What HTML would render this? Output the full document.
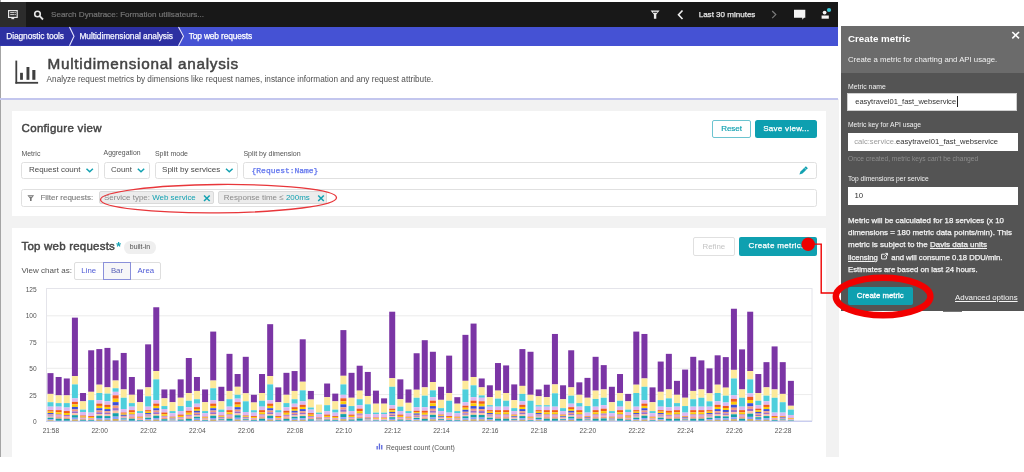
<!DOCTYPE html>
<html><head><meta charset="utf-8">
<style>
html,body{margin:0;padding:0;}
body{will-change:transform;width:1024px;height:472px;overflow:hidden;position:relative;background:#ffffff;font-family:"Liberation Sans", sans-serif;}
.a{position:absolute;box-sizing:border-box;}
.t{position:absolute;white-space:pre;line-height:1;}
.dd{position:absolute;box-sizing:border-box;background:#fff;border:1px solid #e0e0e0;border-radius:2.5px;}
.chip{position:absolute;box-sizing:border-box;background:#ececec;border:1px solid #dadada;border-radius:2px;}
svg{position:absolute;left:0;top:0;overflow:visible;}
</style></head><body>
<!-- left border line -->
<div class="a" style="left:0;top:0;width:1.2px;height:456.5px;background:#a4a4a4"></div>
<!-- gray page bg -->
<div class="a" style="left:1px;top:99px;width:837.5px;height:357.5px;background:#f2f2f2"></div>
<!-- scroll line -->
<!-- top bar -->
<div class="a" style="left:0;top:2px;width:838px;height:25px;background:#181818"></div>
<div class="a" style="left:0;top:2px;width:26px;height:25px;background:#2c2c2c"></div>
<!-- breadcrumb -->
<div class="a" style="left:0;top:27px;width:838px;height:18.7px;background:#4552d4"></div>
<svg width="1024" height="472" style="pointer-events:none">
  <polygon points="0,27 179,27 184,36.3 179,45.7 0,45.7" fill="#2d30a2"/>
  <polyline points="69.5,27 74,36.3 69.5,45.7" fill="none" stroke="#e8e8ff" stroke-width="1.1"/>
  <polyline points="178.5,27 183.5,36.3 178.5,45.7" fill="none" stroke="#e8e8ff" stroke-width="1.1"/>
</svg>
<!-- header white -->
<div class="a" style="left:1px;top:45.5px;width:837px;height:52.5px;background:#ffffff"></div>
<div class="a" style="left:0;top:98px;width:838px;height:1.5px;background:#c3c6ee"></div>
<!-- cards -->
<div class="a" style="left:11.7px;top:110.7px;width:814.8px;height:105.3px;background:#fff"></div>
<div class="a" style="left:11.7px;top:227.7px;width:814.6px;height:229.5px;background:#fff"></div>

<!-- card1 controls -->
<div class="dd" style="left:21px;top:161.6px;width:77.5px;height:17.6px"></div>
<div class="dd" style="left:103.6px;top:161.6px;width:46.2px;height:17.6px"></div>
<div class="dd" style="left:154.9px;top:161.6px;width:83.4px;height:17.6px"></div>
<div class="dd" style="left:243.4px;top:161.6px;width:573.6px;height:17.6px"></div>
<div class="dd" style="left:21px;top:189.3px;width:796px;height:17.5px"></div>
<div class="chip" style="left:98.5px;top:191.2px;width:115px;height:13.3px"></div>
<div class="chip" style="left:218.4px;top:191.2px;width:108.9px;height:13.3px"></div>
<!-- buttons card1 -->
<div class="a" style="left:712.3px;top:119.6px;width:38.6px;height:18.8px;border:1px solid #6cc4d0;border-radius:2px;background:#fff"></div>
<div class="t" style="left:712.3px;width:38.6px;text-align:center;top:125px;font-size:8px;color:#12a1b1;-webkit-text-stroke:0.2px #12a1b1">Reset</div>
<div class="a" style="left:755.2px;top:119.6px;width:61.8px;height:18.8px;border-radius:2.5px;background:#0d9fb0"></div>
<div class="t" style="left:755.5px;width:61.5px;text-align:center;top:124.8px;font-size:8.1px;color:#fff;letter-spacing:0.25px;-webkit-text-stroke:0.25px #fff">Save view...</div>

<!-- card2 controls -->
<div class="a" style="left:124px;top:241.4px;width:32px;height:12.6px;border-radius:6.3px;background:#efefef"></div>
<div class="t" style="left:124px;width:32px;text-align:center;top:244.2px;font-size:6.9px;color:#4e4e4e">built-in</div>
<div class="a" style="left:74.2px;top:261.5px;width:86.8px;height:18px;border:1px solid #dedede;border-radius:2px;background:#fff"></div>
<div class="a" style="left:103.3px;top:261.5px;width:27.4px;height:18px;border:1px solid #8a90da;background:#f6f6f8"></div>
<div class="t" style="left:74.2px;width:29.1px;text-align:center;top:267px;font-size:7.8px;color:#4e5ad6">Line</div>
<div class="t" style="left:103.3px;width:27.4px;text-align:center;top:267px;font-size:7.8px;color:#5a62b8">Bar</div>
<div class="t" style="left:130.7px;width:30.3px;text-align:center;top:267px;font-size:7.8px;color:#4e5ad6">Area</div>
<div class="a" style="left:693px;top:237.4px;width:41.7px;height:18.2px;border:1px solid #e0e0e0;border-radius:2px;background:#fff"></div>
<div class="t" style="left:693px;width:41.7px;text-align:center;top:243.3px;font-size:7.9px;color:#c4c4c4">Refine</div>
<div class="a" style="left:739px;top:237.4px;width:78.4px;height:18.2px;border-radius:2px;background:#0fa0b0"></div>
<div class="t" style="left:748.6px;top:242.4px;font-size:8.1px;letter-spacing:0.3px;color:#fff;-webkit-text-stroke:0.25px #fff">Create metric...</div>

<!-- side panel -->
<div class="a" style="left:841px;top:26.2px;width:183px;height:47px;background:#6b6b6b"></div>
<div class="a" style="left:841px;top:73.2px;width:183px;height:237.8px;background:#545454"></div>
<div class="a" style="left:846.6px;top:92.5px;width:170.4px;height:18.5px;background:#fff;border:1px solid #cfcfcf"></div>
<div class="a" style="left:956.5px;top:96px;width:0.9px;height:11px;background:#222"></div>
<div class="a" style="left:847.9px;top:133px;width:170px;height:18px;background:#fff"></div>
<div class="a" style="left:847.9px;top:186.8px;width:170px;height:17.9px;background:#fff"></div>
<div class="a" style="left:847.5px;top:287px;width:65.5px;height:17.5px;border-radius:2px;background:#0fa0b0"></div>
<div class="t" style="left:847.5px;width:65.5px;text-align:center;top:292.3px;font-size:7.8px;color:#fff;-webkit-text-stroke:0.3px #fff">Create metric</div>
<div class="a" style="left:942.6px;top:310.5px;width:19px;height:1.6px;background:#777"></div>

<div class="t" style="left:51px;top:11.26px;font-size:8.08px;color:#747474;font-weight:normal;font-family:'Liberation Sans', sans-serif;-webkit-text-stroke:0.2px #747474;">Search Dynatrace: Formation utilisateurs...</div>
<div class="t" style="left:698.7px;top:11.19px;font-size:8.048px;color:#e6e6e6;font-weight:normal;font-family:'Liberation Sans', sans-serif;-webkit-text-stroke:0.25px currentColor;">Last 30 minutes</div>
<div class="t" style="left:6.2px;top:32.39px;font-size:8.4px;color:#f4f4ff;font-weight:normal;font-family:'Liberation Sans', sans-serif;-webkit-text-stroke:0.25px currentColor;letter-spacing:-0.083px;">Diagnostic tools</div>
<div class="t" style="left:79.4px;top:32.39px;font-size:8.4px;color:#f4f4ff;font-weight:normal;font-family:'Liberation Sans', sans-serif;-webkit-text-stroke:0.25px currentColor;letter-spacing:-0.059px;">Multidimensional analysis</div>
<div class="t" style="left:188.7px;top:32.39px;font-size:8.4px;color:#ffffff;font-weight:normal;font-family:'Liberation Sans', sans-serif;-webkit-text-stroke:0.25px currentColor;letter-spacing:-0.147px;">Top web requests</div>
<div class="t" style="left:47.5px;top:56.45px;font-size:15.3px;color:#444;font-weight:normal;font-family:'Liberation Sans', sans-serif;-webkit-text-stroke:0.5px #444;letter-spacing:0.722px;">Multidimensional analysis</div>
<div class="t" style="left:46.6px;top:76.25px;font-size:8.21px;color:#505050;font-weight:normal;font-family:'Liberation Sans', sans-serif;">Analyze request metrics by dimensions like request names, instance information and any request attribute.</div>
<div class="t" style="left:21.6px;top:123.27px;font-size:11.5px;color:#444;font-weight:normal;font-family:'Liberation Sans', sans-serif;-webkit-text-stroke:0.45px #444;letter-spacing:0.294px;">Configure view</div>
<div class="t" style="left:21.4px;top:149.99px;font-size:6.977px;color:#555;font-weight:normal;font-family:'Liberation Sans', sans-serif;">Metric</div>
<div class="t" style="left:103.6px;top:150.09px;font-size:6.858px;color:#555;font-weight:normal;font-family:'Liberation Sans', sans-serif;">Aggregation</div>
<div class="t" style="left:154.9px;top:149.97px;font-size:7.005px;color:#555;font-weight:normal;font-family:'Liberation Sans', sans-serif;">Split mode</div>
<div class="t" style="left:243.4px;top:149.91px;font-size:7.072px;color:#555;font-weight:normal;font-family:'Liberation Sans', sans-serif;">Split by dimension</div>
<div class="t" style="left:29px;top:165.84px;font-size:7.985px;color:#4a4a4a;font-weight:normal;font-family:'Liberation Sans', sans-serif;">Request count</div>
<div class="t" style="left:110.9px;top:165.94px;font-size:7.865px;color:#4a4a4a;font-weight:normal;font-family:'Liberation Sans', sans-serif;">Count</div>
<div class="t" style="left:162px;top:165.77px;font-size:8.07px;color:#4a4a4a;font-weight:normal;font-family:'Liberation Sans', sans-serif;">Split by services</div>
<div class="t" style="left:251.6px;top:166.57px;font-size:7.953px;color:#6074ee;font-weight:normal;font-family:'Liberation Mono', monospace;-webkit-text-stroke:0.25px #6074ee;">{Request:Name}</div>
<div class="t" style="left:40.4px;top:194.04px;font-size:7.984px;color:#808080;font-weight:normal;font-family:'Liberation Sans', sans-serif;-webkit-text-stroke:0.15px #808080;">Filter requests:</div>
<div class="t" style="left:104px;top:193.86px;font-size:7.962px;color:#8a8a8a;font-weight:normal;font-family:'Liberation Sans', sans-serif;">Service type: <span style="color:#12a1b1">Web service</span></div>
<div class="t" style="left:223.8px;top:193.83px;font-size:7.998px;color:#8a8a8a;font-weight:normal;font-family:'Liberation Sans', sans-serif;">Response time &le; <span style="color:#12a1b1">200ms</span></div>
<div class="t" style="left:21.5px;top:241.27px;font-size:11.5px;color:#444;font-weight:normal;font-family:'Liberation Sans', sans-serif;-webkit-text-stroke:0.45px #444;letter-spacing:0.210px;">Top web requests</div>
<div class="t" style="left:116.2px;top:241.14px;font-size:12px;color:#12a1b1;font-weight:bold;font-family:'Liberation Sans', sans-serif;">*</div>
<div class="t" style="left:21.5px;top:266.78px;font-size:8.062px;color:#555;font-weight:normal;font-family:'Liberation Sans', sans-serif;">View chart as:</div>
<div class="t" style="left:-63.3px;width:100px;text-align:right;top:287.11px;font-size:6.6px;color:#555;font-weight:normal;font-family:'Liberation Sans', sans-serif;">125</div>
<div class="t" style="left:-63.3px;width:100px;text-align:right;top:313.21px;font-size:6.6px;color:#555;font-weight:normal;font-family:'Liberation Sans', sans-serif;">100</div>
<div class="t" style="left:-63.3px;width:100px;text-align:right;top:339.61px;font-size:6.6px;color:#555;font-weight:normal;font-family:'Liberation Sans', sans-serif;">75</div>
<div class="t" style="left:-63.3px;width:100px;text-align:right;top:366.41px;font-size:6.6px;color:#555;font-weight:normal;font-family:'Liberation Sans', sans-serif;">50</div>
<div class="t" style="left:-63.3px;width:100px;text-align:right;top:392.91px;font-size:6.6px;color:#555;font-weight:normal;font-family:'Liberation Sans', sans-serif;">25</div>
<div class="t" style="left:-63.3px;width:100px;text-align:right;top:418.61px;font-size:6.6px;color:#555;font-weight:normal;font-family:'Liberation Sans', sans-serif;">0</div>
<div class="t" style="left:0.8999999999999986px;width:100px;text-align:center;top:427.91px;font-size:6.6px;color:#555;font-weight:normal;font-family:'Liberation Sans', sans-serif;">21:58</div>
<div class="t" style="left:49.71600000000001px;width:100px;text-align:center;top:427.91px;font-size:6.6px;color:#555;font-weight:normal;font-family:'Liberation Sans', sans-serif;">22:00</div>
<div class="t" style="left:98.53200000000001px;width:100px;text-align:center;top:427.91px;font-size:6.6px;color:#555;font-weight:normal;font-family:'Liberation Sans', sans-serif;">22:02</div>
<div class="t" style="left:147.348px;width:100px;text-align:center;top:427.91px;font-size:6.6px;color:#555;font-weight:normal;font-family:'Liberation Sans', sans-serif;">22:04</div>
<div class="t" style="left:196.16400000000002px;width:100px;text-align:center;top:427.91px;font-size:6.6px;color:#555;font-weight:normal;font-family:'Liberation Sans', sans-serif;">22:06</div>
<div class="t" style="left:244.98000000000002px;width:100px;text-align:center;top:427.91px;font-size:6.6px;color:#555;font-weight:normal;font-family:'Liberation Sans', sans-serif;">22:08</div>
<div class="t" style="left:293.796px;width:100px;text-align:center;top:427.91px;font-size:6.6px;color:#555;font-weight:normal;font-family:'Liberation Sans', sans-serif;">22:10</div>
<div class="t" style="left:342.61199999999997px;width:100px;text-align:center;top:427.91px;font-size:6.6px;color:#555;font-weight:normal;font-family:'Liberation Sans', sans-serif;">22:12</div>
<div class="t" style="left:391.428px;width:100px;text-align:center;top:427.91px;font-size:6.6px;color:#555;font-weight:normal;font-family:'Liberation Sans', sans-serif;">22:14</div>
<div class="t" style="left:440.244px;width:100px;text-align:center;top:427.91px;font-size:6.6px;color:#555;font-weight:normal;font-family:'Liberation Sans', sans-serif;">22:16</div>
<div class="t" style="left:489.06000000000006px;width:100px;text-align:center;top:427.91px;font-size:6.6px;color:#555;font-weight:normal;font-family:'Liberation Sans', sans-serif;">22:18</div>
<div class="t" style="left:537.876px;width:100px;text-align:center;top:427.91px;font-size:6.6px;color:#555;font-weight:normal;font-family:'Liberation Sans', sans-serif;">22:20</div>
<div class="t" style="left:586.692px;width:100px;text-align:center;top:427.91px;font-size:6.6px;color:#555;font-weight:normal;font-family:'Liberation Sans', sans-serif;">22:22</div>
<div class="t" style="left:635.508px;width:100px;text-align:center;top:427.91px;font-size:6.6px;color:#555;font-weight:normal;font-family:'Liberation Sans', sans-serif;">22:24</div>
<div class="t" style="left:684.324px;width:100px;text-align:center;top:427.91px;font-size:6.6px;color:#555;font-weight:normal;font-family:'Liberation Sans', sans-serif;">22:26</div>
<div class="t" style="left:733.14px;width:100px;text-align:center;top:427.91px;font-size:6.6px;color:#555;font-weight:normal;font-family:'Liberation Sans', sans-serif;">22:28</div>
<div class="t" style="left:386px;top:444.70px;font-size:6.857px;color:#555;font-weight:normal;font-family:'Liberation Sans', sans-serif;">Request count (Count)</div>
<div class="t" style="left:848px;top:33.72px;font-size:9.78px;color:#ffffff;font-weight:bold;font-family:'Liberation Sans', sans-serif;">Create metric</div>
<div class="t" style="left:848px;top:56.40px;font-size:7.793px;color:#f2f2f2;font-weight:normal;font-family:'Liberation Sans', sans-serif;">Create a metric for charting and API usage.</div>
<div class="t" style="left:848px;top:83.59px;font-size:6.864px;color:#f2f2f2;font-weight:normal;font-family:'Liberation Sans', sans-serif;">Metric name</div>
<div class="t" style="left:855.2px;top:97.92px;font-size:7.542px;color:#333;font-weight:normal;font-family:'Liberation Sans', sans-serif;">easytravel01_fast_webservice</div>
<div class="t" style="left:848px;top:121.59px;font-size:6.747px;color:#f2f2f2;font-weight:normal;font-family:'Liberation Sans', sans-serif;">Metric key for API usage</div>
<div class="t" style="left:854.2px;top:137.56px;font-size:7.612px;color:#333;font-weight:normal;font-family:'Liberation Sans', sans-serif;"><span style="color:#9a9a9a">calc:service.</span>easytravel01_fast_webservice</div>
<div class="t" style="left:848px;top:155.83px;font-size:6.7px;color:#8e8e8e;font-weight:normal;font-family:'Liberation Sans', sans-serif;">Once created, metric keys can&#39;t be changed</div>
<div class="t" style="left:848px;top:175.85px;font-size:6.671px;color:#f2f2f2;font-weight:normal;font-family:'Liberation Sans', sans-serif;">Top dimensions per service</div>
<div class="t" style="left:854.5px;top:191.60px;font-size:7.8px;color:#333;font-weight:normal;font-family:'Liberation Sans', sans-serif;">10</div>
<div class="t" style="left:848px;top:216.54px;font-size:7.873px;color:#f4f4f4;font-weight:normal;font-family:'Liberation Sans', sans-serif;-webkit-text-stroke:0.25px #f4f4f4;">Metric will be calculated for 18 services (x 10</div>
<div class="t" style="left:848px;top:228.88px;font-size:7.939px;color:#f4f4f4;font-weight:normal;font-family:'Liberation Sans', sans-serif;-webkit-text-stroke:0.25px #f4f4f4;">dimensions = 180 metric data points/min). This</div>
<div class="t" style="left:848px;top:241.21px;font-size:8.026px;color:#f4f4f4;font-weight:normal;font-family:'Liberation Sans', sans-serif;-webkit-text-stroke:0.25px #f4f4f4;">metric is subject to the <u>Davis data units</u></div>
<div class="t" style="left:848px;top:253.89px;font-size:7.686px;color:#f4f4f4;font-weight:normal;font-family:'Liberation Sans', sans-serif;-webkit-text-stroke:0.25px #f4f4f4;"><u>licensing</u> <span style="display:inline-block;width:9px"></span> and will consume 0.18 DDU/min.</div>
<div class="t" style="left:848px;top:266.26px;font-size:7.725px;color:#f4f4f4;font-weight:normal;font-family:'Liberation Sans', sans-serif;-webkit-text-stroke:0.25px #f4f4f4;">Estimates are based on last 24 hours.</div>
<div class="t" style="left:955px;top:293.62px;font-size:7.897px;color:#f4f4f4;font-weight:normal;font-family:'Liberation Sans', sans-serif;"><u>Advanced options</u></div>

<svg width="1024" height="472">
<line x1="46" y1="315.8" x2="812" y2="315.8" stroke="#ececec" stroke-width="1"/>
<line x1="46" y1="342.1" x2="812" y2="342.1" stroke="#ececec" stroke-width="1"/>
<line x1="46" y1="368.3" x2="812" y2="368.3" stroke="#ececec" stroke-width="1"/>
<line x1="46" y1="394.6" x2="812" y2="394.6" stroke="#ececec" stroke-width="1"/>
<rect x="46.5" y="288.5" width="765.5" height="132.4" fill="none" stroke="#e4e4ea" stroke-width="1"/>
<rect x="47.50" y="373.13" width="6.0" height="20.77" fill="#7b35a5"/>
<rect x="47.50" y="393.90" width="6.0" height="8.31" fill="#fde99a"/>
<rect x="47.50" y="402.21" width="6.0" height="4.45" fill="#4ecfdc"/>
<rect x="47.50" y="406.66" width="6.0" height="3.50" fill="#dcb8f0"/>
<rect x="47.50" y="410.16" width="6.0" height="1.43" fill="#f05a1e"/>
<rect x="47.50" y="411.59" width="6.0" height="1.43" fill="#fccc0a"/>
<rect x="47.50" y="413.03" width="6.0" height="1.43" fill="#3f50d8"/>
<rect x="47.50" y="414.46" width="6.0" height="1.07" fill="#f59a7a"/>
<rect x="47.50" y="415.53" width="6.0" height="1.07" fill="#9d6cc9"/>
<rect x="47.50" y="416.60" width="6.0" height="1.07" fill="#fcc4a4"/>
<rect x="47.50" y="417.68" width="6.0" height="1.43" fill="#14a0a8"/>
<rect x="47.50" y="419.11" width="6.0" height="1.07" fill="#8fa2f8"/>
<rect x="47.50" y="420.18" width="6.0" height="0.72" fill="#c9a030"/>
<rect x="55.64" y="376.99" width="6.0" height="18.40" fill="#7b35a5"/>
<rect x="55.64" y="395.39" width="6.0" height="7.72" fill="#fde99a"/>
<rect x="55.64" y="403.10" width="6.0" height="3.56" fill="#4ecfdc"/>
<rect x="55.64" y="406.66" width="6.0" height="3.50" fill="#dcb8f0"/>
<rect x="55.64" y="410.16" width="6.0" height="2.15" fill="#f05a1e"/>
<rect x="55.64" y="412.31" width="6.0" height="2.15" fill="#fccc0a"/>
<rect x="55.64" y="414.46" width="6.0" height="1.07" fill="#9d6cc9"/>
<rect x="55.64" y="415.53" width="6.0" height="1.61" fill="#e9a2c6"/>
<rect x="55.64" y="417.14" width="6.0" height="1.61" fill="#f59a7a"/>
<rect x="55.64" y="418.75" width="6.0" height="2.15" fill="#14a0a8"/>
<rect x="63.77" y="378.47" width="6.0" height="16.91" fill="#7b35a5"/>
<rect x="63.77" y="395.39" width="6.0" height="7.72" fill="#fde99a"/>
<rect x="63.77" y="403.10" width="6.0" height="4.45" fill="#4ecfdc"/>
<rect x="63.77" y="407.55" width="6.0" height="3.50" fill="#dcb8f0"/>
<rect x="63.77" y="411.05" width="6.0" height="1.97" fill="#f05a1e"/>
<rect x="63.77" y="413.02" width="6.0" height="1.97" fill="#fccc0a"/>
<rect x="63.77" y="414.99" width="6.0" height="0.98" fill="#9d6cc9"/>
<rect x="63.77" y="415.98" width="6.0" height="1.48" fill="#e9a2c6"/>
<rect x="63.77" y="417.45" width="6.0" height="1.48" fill="#f59a7a"/>
<rect x="63.77" y="418.93" width="6.0" height="1.97" fill="#14a0a8"/>
<rect x="71.91" y="317.64" width="6.0" height="58.46" fill="#7b35a5"/>
<rect x="71.91" y="376.10" width="6.0" height="8.31" fill="#fde99a"/>
<rect x="71.91" y="384.41" width="6.0" height="13.95" fill="#4ecfdc"/>
<rect x="71.91" y="398.35" width="6.0" height="3.50" fill="#dcb8f0"/>
<rect x="71.91" y="401.85" width="6.0" height="2.54" fill="#f05a1e"/>
<rect x="71.91" y="404.39" width="6.0" height="2.54" fill="#fccc0a"/>
<rect x="71.91" y="406.93" width="6.0" height="2.54" fill="#3f50d8"/>
<rect x="71.91" y="409.47" width="6.0" height="1.90" fill="#f59a7a"/>
<rect x="71.91" y="411.38" width="6.0" height="1.90" fill="#9d6cc9"/>
<rect x="71.91" y="413.28" width="6.0" height="1.90" fill="#fcc4a4"/>
<rect x="71.91" y="415.19" width="6.0" height="2.54" fill="#14a0a8"/>
<rect x="71.91" y="417.73" width="6.0" height="1.90" fill="#8fa2f8"/>
<rect x="71.91" y="419.63" width="6.0" height="1.27" fill="#c9a030"/>
<rect x="80.04" y="393.01" width="6.0" height="8.31" fill="#7b35a5"/>
<rect x="80.04" y="401.32" width="6.0" height="8.31" fill="#fde99a"/>
<rect x="80.04" y="409.63" width="6.0" height="2.37" fill="#4ecfdc"/>
<rect x="80.04" y="412.00" width="6.0" height="3.50" fill="#dcb8f0"/>
<rect x="80.04" y="415.50" width="6.0" height="1.08" fill="#f05a1e"/>
<rect x="80.04" y="416.58" width="6.0" height="1.08" fill="#fccc0a"/>
<rect x="80.04" y="417.66" width="6.0" height="0.54" fill="#9d6cc9"/>
<rect x="80.04" y="418.20" width="6.0" height="0.81" fill="#e9a2c6"/>
<rect x="80.04" y="419.01" width="6.0" height="0.81" fill="#f59a7a"/>
<rect x="80.04" y="419.82" width="6.0" height="1.08" fill="#14a0a8"/>
<rect x="88.18" y="350.28" width="6.0" height="41.54" fill="#7b35a5"/>
<rect x="88.18" y="391.82" width="6.0" height="8.31" fill="#fde99a"/>
<rect x="88.18" y="400.13" width="6.0" height="12.46" fill="#4ecfdc"/>
<rect x="88.18" y="412.60" width="6.0" height="3.50" fill="#dcb8f0"/>
<rect x="88.18" y="416.10" width="6.0" height="0.96" fill="#f05a1e"/>
<rect x="88.18" y="417.06" width="6.0" height="0.96" fill="#fccc0a"/>
<rect x="88.18" y="418.02" width="6.0" height="0.48" fill="#9d6cc9"/>
<rect x="88.18" y="418.50" width="6.0" height="0.72" fill="#e9a2c6"/>
<rect x="88.18" y="419.22" width="6.0" height="0.72" fill="#f59a7a"/>
<rect x="88.18" y="419.94" width="6.0" height="0.96" fill="#14a0a8"/>
<rect x="96.32" y="349.09" width="6.0" height="35.61" fill="#7b35a5"/>
<rect x="96.32" y="384.70" width="6.0" height="8.31" fill="#fde99a"/>
<rect x="96.32" y="393.01" width="6.0" height="7.12" fill="#4ecfdc"/>
<rect x="96.32" y="400.13" width="6.0" height="3.50" fill="#dcb8f0"/>
<rect x="96.32" y="403.63" width="6.0" height="2.30" fill="#f05a1e"/>
<rect x="96.32" y="405.94" width="6.0" height="2.30" fill="#fccc0a"/>
<rect x="96.32" y="408.24" width="6.0" height="2.30" fill="#3f50d8"/>
<rect x="96.32" y="410.54" width="6.0" height="1.73" fill="#f59a7a"/>
<rect x="96.32" y="412.27" width="6.0" height="1.73" fill="#9d6cc9"/>
<rect x="96.32" y="413.99" width="6.0" height="1.73" fill="#fcc4a4"/>
<rect x="96.32" y="415.72" width="6.0" height="2.30" fill="#14a0a8"/>
<rect x="96.32" y="418.02" width="6.0" height="1.73" fill="#8fa2f8"/>
<rect x="96.32" y="419.75" width="6.0" height="1.15" fill="#c9a030"/>
<rect x="104.45" y="347.91" width="6.0" height="39.47" fill="#7b35a5"/>
<rect x="104.45" y="387.37" width="6.0" height="6.23" fill="#fde99a"/>
<rect x="104.45" y="393.61" width="6.0" height="7.72" fill="#4ecfdc"/>
<rect x="104.45" y="401.32" width="6.0" height="3.50" fill="#dcb8f0"/>
<rect x="104.45" y="404.82" width="6.0" height="2.14" fill="#f05a1e"/>
<rect x="104.45" y="406.96" width="6.0" height="2.14" fill="#fccc0a"/>
<rect x="104.45" y="409.11" width="6.0" height="2.14" fill="#3f50d8"/>
<rect x="104.45" y="411.25" width="6.0" height="1.61" fill="#f59a7a"/>
<rect x="104.45" y="412.86" width="6.0" height="1.61" fill="#9d6cc9"/>
<rect x="104.45" y="414.47" width="6.0" height="1.61" fill="#fcc4a4"/>
<rect x="104.45" y="416.08" width="6.0" height="2.14" fill="#14a0a8"/>
<rect x="104.45" y="418.22" width="6.0" height="1.61" fill="#8fa2f8"/>
<rect x="104.45" y="419.83" width="6.0" height="1.07" fill="#c9a030"/>
<rect x="112.59" y="360.37" width="6.0" height="20.18" fill="#7b35a5"/>
<rect x="112.59" y="380.55" width="6.0" height="7.72" fill="#fde99a"/>
<rect x="112.59" y="388.26" width="6.0" height="3.56" fill="#4ecfdc"/>
<rect x="112.59" y="391.82" width="6.0" height="3.50" fill="#dcb8f0"/>
<rect x="112.59" y="395.32" width="6.0" height="3.41" fill="#f05a1e"/>
<rect x="112.59" y="398.73" width="6.0" height="3.41" fill="#fccc0a"/>
<rect x="112.59" y="402.14" width="6.0" height="3.41" fill="#3f50d8"/>
<rect x="112.59" y="405.55" width="6.0" height="2.56" fill="#f59a7a"/>
<rect x="112.59" y="408.11" width="6.0" height="2.56" fill="#9d6cc9"/>
<rect x="112.59" y="410.67" width="6.0" height="2.56" fill="#fcc4a4"/>
<rect x="112.59" y="413.23" width="6.0" height="3.41" fill="#14a0a8"/>
<rect x="112.59" y="416.64" width="6.0" height="2.56" fill="#8fa2f8"/>
<rect x="112.59" y="419.19" width="6.0" height="1.71" fill="#c9a030"/>
<rect x="120.72" y="352.95" width="6.0" height="36.50" fill="#7b35a5"/>
<rect x="120.72" y="389.45" width="6.0" height="8.31" fill="#fde99a"/>
<rect x="120.72" y="397.76" width="6.0" height="11.28" fill="#4ecfdc"/>
<rect x="120.72" y="409.04" width="6.0" height="3.50" fill="#dcb8f0"/>
<rect x="120.72" y="412.54" width="6.0" height="1.12" fill="#f05a1e"/>
<rect x="120.72" y="413.65" width="6.0" height="1.12" fill="#fccc0a"/>
<rect x="120.72" y="414.77" width="6.0" height="1.12" fill="#3f50d8"/>
<rect x="120.72" y="415.88" width="6.0" height="0.84" fill="#f59a7a"/>
<rect x="120.72" y="416.72" width="6.0" height="0.84" fill="#9d6cc9"/>
<rect x="120.72" y="417.55" width="6.0" height="0.84" fill="#fcc4a4"/>
<rect x="120.72" y="418.39" width="6.0" height="1.12" fill="#14a0a8"/>
<rect x="120.72" y="419.51" width="6.0" height="0.84" fill="#8fa2f8"/>
<rect x="120.72" y="420.34" width="6.0" height="0.56" fill="#c9a030"/>
<rect x="128.86" y="376.99" width="6.0" height="17.80" fill="#7b35a5"/>
<rect x="128.86" y="394.79" width="6.0" height="8.31" fill="#fde99a"/>
<rect x="128.86" y="403.10" width="6.0" height="3.56" fill="#4ecfdc"/>
<rect x="128.86" y="406.66" width="6.0" height="3.50" fill="#dcb8f0"/>
<rect x="128.86" y="410.16" width="6.0" height="2.15" fill="#f05a1e"/>
<rect x="128.86" y="412.31" width="6.0" height="2.15" fill="#fccc0a"/>
<rect x="128.86" y="414.46" width="6.0" height="1.07" fill="#9d6cc9"/>
<rect x="128.86" y="415.53" width="6.0" height="1.61" fill="#e9a2c6"/>
<rect x="128.86" y="417.14" width="6.0" height="1.61" fill="#f59a7a"/>
<rect x="128.86" y="418.75" width="6.0" height="2.15" fill="#14a0a8"/>
<rect x="137.00" y="389.45" width="6.0" height="12.76" fill="#7b35a5"/>
<rect x="137.00" y="402.21" width="6.0" height="8.90" fill="#fde99a"/>
<rect x="137.00" y="411.11" width="6.0" height="2.08" fill="#4ecfdc"/>
<rect x="137.00" y="413.19" width="6.0" height="3.50" fill="#dcb8f0"/>
<rect x="137.00" y="416.69" width="6.0" height="0.84" fill="#f05a1e"/>
<rect x="137.00" y="417.53" width="6.0" height="0.84" fill="#fccc0a"/>
<rect x="137.00" y="418.37" width="6.0" height="0.42" fill="#9d6cc9"/>
<rect x="137.00" y="418.79" width="6.0" height="0.63" fill="#e9a2c6"/>
<rect x="137.00" y="419.43" width="6.0" height="0.63" fill="#f59a7a"/>
<rect x="137.00" y="420.06" width="6.0" height="0.84" fill="#14a0a8"/>
<rect x="145.13" y="344.35" width="6.0" height="43.03" fill="#7b35a5"/>
<rect x="145.13" y="387.37" width="6.0" height="8.90" fill="#fde99a"/>
<rect x="145.13" y="396.28" width="6.0" height="10.39" fill="#4ecfdc"/>
<rect x="145.13" y="406.66" width="6.0" height="3.50" fill="#dcb8f0"/>
<rect x="145.13" y="410.16" width="6.0" height="1.43" fill="#f05a1e"/>
<rect x="145.13" y="411.59" width="6.0" height="1.43" fill="#fccc0a"/>
<rect x="145.13" y="413.03" width="6.0" height="1.43" fill="#3f50d8"/>
<rect x="145.13" y="414.46" width="6.0" height="1.07" fill="#f59a7a"/>
<rect x="145.13" y="415.53" width="6.0" height="1.07" fill="#9d6cc9"/>
<rect x="145.13" y="416.60" width="6.0" height="1.07" fill="#fcc4a4"/>
<rect x="145.13" y="417.68" width="6.0" height="1.43" fill="#14a0a8"/>
<rect x="145.13" y="419.11" width="6.0" height="1.07" fill="#8fa2f8"/>
<rect x="145.13" y="420.18" width="6.0" height="0.72" fill="#c9a030"/>
<rect x="153.27" y="307.26" width="6.0" height="63.80" fill="#7b35a5"/>
<rect x="153.27" y="371.05" width="6.0" height="8.31" fill="#fde99a"/>
<rect x="153.27" y="379.36" width="6.0" height="20.77" fill="#4ecfdc"/>
<rect x="153.27" y="400.13" width="6.0" height="3.50" fill="#dcb8f0"/>
<rect x="153.27" y="403.63" width="6.0" height="2.30" fill="#f05a1e"/>
<rect x="153.27" y="405.94" width="6.0" height="2.30" fill="#fccc0a"/>
<rect x="153.27" y="408.24" width="6.0" height="2.30" fill="#3f50d8"/>
<rect x="153.27" y="410.54" width="6.0" height="1.73" fill="#f59a7a"/>
<rect x="153.27" y="412.27" width="6.0" height="1.73" fill="#9d6cc9"/>
<rect x="153.27" y="413.99" width="6.0" height="1.73" fill="#fcc4a4"/>
<rect x="153.27" y="415.72" width="6.0" height="2.30" fill="#14a0a8"/>
<rect x="153.27" y="418.02" width="6.0" height="1.73" fill="#8fa2f8"/>
<rect x="153.27" y="419.75" width="6.0" height="1.15" fill="#c9a030"/>
<rect x="161.40" y="389.45" width="6.0" height="8.90" fill="#7b35a5"/>
<rect x="161.40" y="398.35" width="6.0" height="7.72" fill="#fde99a"/>
<rect x="161.40" y="406.07" width="6.0" height="2.97" fill="#4ecfdc"/>
<rect x="161.40" y="409.04" width="6.0" height="3.50" fill="#dcb8f0"/>
<rect x="161.40" y="412.54" width="6.0" height="1.67" fill="#f05a1e"/>
<rect x="161.40" y="414.21" width="6.0" height="1.67" fill="#fccc0a"/>
<rect x="161.40" y="415.88" width="6.0" height="0.84" fill="#9d6cc9"/>
<rect x="161.40" y="416.72" width="6.0" height="1.25" fill="#e9a2c6"/>
<rect x="161.40" y="417.97" width="6.0" height="1.25" fill="#f59a7a"/>
<rect x="161.40" y="419.23" width="6.0" height="1.67" fill="#14a0a8"/>
<rect x="169.54" y="389.45" width="6.0" height="12.76" fill="#7b35a5"/>
<rect x="169.54" y="402.21" width="6.0" height="8.90" fill="#fde99a"/>
<rect x="169.54" y="411.11" width="6.0" height="2.08" fill="#4ecfdc"/>
<rect x="169.54" y="413.19" width="6.0" height="3.50" fill="#dcb8f0"/>
<rect x="169.54" y="416.69" width="6.0" height="0.56" fill="#f05a1e"/>
<rect x="169.54" y="417.25" width="6.0" height="0.56" fill="#fccc0a"/>
<rect x="169.54" y="417.81" width="6.0" height="0.56" fill="#3f50d8"/>
<rect x="169.54" y="418.37" width="6.0" height="0.42" fill="#f59a7a"/>
<rect x="169.54" y="418.79" width="6.0" height="0.42" fill="#9d6cc9"/>
<rect x="169.54" y="419.22" width="6.0" height="0.42" fill="#fcc4a4"/>
<rect x="169.54" y="419.64" width="6.0" height="0.56" fill="#14a0a8"/>
<rect x="169.54" y="420.20" width="6.0" height="0.42" fill="#8fa2f8"/>
<rect x="169.54" y="420.62" width="6.0" height="0.28" fill="#c9a030"/>
<rect x="177.68" y="379.36" width="6.0" height="18.40" fill="#7b35a5"/>
<rect x="177.68" y="397.76" width="6.0" height="8.31" fill="#fde99a"/>
<rect x="177.68" y="406.07" width="6.0" height="5.04" fill="#4ecfdc"/>
<rect x="177.68" y="411.11" width="6.0" height="3.50" fill="#dcb8f0"/>
<rect x="177.68" y="414.61" width="6.0" height="1.26" fill="#f05a1e"/>
<rect x="177.68" y="415.87" width="6.0" height="1.26" fill="#fccc0a"/>
<rect x="177.68" y="417.13" width="6.0" height="0.63" fill="#9d6cc9"/>
<rect x="177.68" y="417.76" width="6.0" height="0.94" fill="#e9a2c6"/>
<rect x="177.68" y="418.70" width="6.0" height="0.94" fill="#f59a7a"/>
<rect x="177.68" y="419.64" width="6.0" height="1.26" fill="#14a0a8"/>
<rect x="185.81" y="358.00" width="6.0" height="35.01" fill="#7b35a5"/>
<rect x="185.81" y="393.01" width="6.0" height="7.72" fill="#fde99a"/>
<rect x="185.81" y="400.73" width="6.0" height="6.53" fill="#4ecfdc"/>
<rect x="185.81" y="407.26" width="6.0" height="3.50" fill="#dcb8f0"/>
<rect x="185.81" y="410.76" width="6.0" height="2.03" fill="#f05a1e"/>
<rect x="185.81" y="412.78" width="6.0" height="2.03" fill="#fccc0a"/>
<rect x="185.81" y="414.81" width="6.0" height="1.01" fill="#9d6cc9"/>
<rect x="185.81" y="415.83" width="6.0" height="1.52" fill="#e9a2c6"/>
<rect x="185.81" y="417.35" width="6.0" height="1.52" fill="#f59a7a"/>
<rect x="185.81" y="418.87" width="6.0" height="2.03" fill="#14a0a8"/>
<rect x="193.95" y="376.99" width="6.0" height="13.95" fill="#7b35a5"/>
<rect x="193.95" y="390.93" width="6.0" height="8.31" fill="#fde99a"/>
<rect x="193.95" y="399.24" width="6.0" height="4.45" fill="#4ecfdc"/>
<rect x="193.95" y="403.69" width="6.0" height="3.50" fill="#dcb8f0"/>
<rect x="193.95" y="407.19" width="6.0" height="1.83" fill="#f05a1e"/>
<rect x="193.95" y="409.02" width="6.0" height="1.83" fill="#fccc0a"/>
<rect x="193.95" y="410.85" width="6.0" height="1.83" fill="#3f50d8"/>
<rect x="193.95" y="412.68" width="6.0" height="1.37" fill="#f59a7a"/>
<rect x="193.95" y="414.05" width="6.0" height="1.37" fill="#9d6cc9"/>
<rect x="193.95" y="415.42" width="6.0" height="1.37" fill="#fcc4a4"/>
<rect x="193.95" y="416.79" width="6.0" height="1.83" fill="#14a0a8"/>
<rect x="193.95" y="418.62" width="6.0" height="1.37" fill="#8fa2f8"/>
<rect x="193.95" y="419.99" width="6.0" height="0.91" fill="#c9a030"/>
<rect x="202.08" y="389.45" width="6.0" height="12.76" fill="#7b35a5"/>
<rect x="202.08" y="402.21" width="6.0" height="8.90" fill="#fde99a"/>
<rect x="202.08" y="411.11" width="6.0" height="2.08" fill="#4ecfdc"/>
<rect x="202.08" y="413.19" width="6.0" height="3.50" fill="#dcb8f0"/>
<rect x="202.08" y="416.69" width="6.0" height="0.84" fill="#f05a1e"/>
<rect x="202.08" y="417.53" width="6.0" height="0.84" fill="#fccc0a"/>
<rect x="202.08" y="418.37" width="6.0" height="0.42" fill="#9d6cc9"/>
<rect x="202.08" y="418.79" width="6.0" height="0.63" fill="#e9a2c6"/>
<rect x="202.08" y="419.43" width="6.0" height="0.63" fill="#f59a7a"/>
<rect x="202.08" y="420.06" width="6.0" height="0.84" fill="#14a0a8"/>
<rect x="210.22" y="331.59" width="6.0" height="48.96" fill="#7b35a5"/>
<rect x="210.22" y="380.55" width="6.0" height="7.72" fill="#fde99a"/>
<rect x="210.22" y="388.26" width="6.0" height="11.87" fill="#4ecfdc"/>
<rect x="210.22" y="400.13" width="6.0" height="3.50" fill="#dcb8f0"/>
<rect x="210.22" y="403.63" width="6.0" height="2.30" fill="#f05a1e"/>
<rect x="210.22" y="405.94" width="6.0" height="2.30" fill="#fccc0a"/>
<rect x="210.22" y="408.24" width="6.0" height="2.30" fill="#3f50d8"/>
<rect x="210.22" y="410.54" width="6.0" height="1.73" fill="#f59a7a"/>
<rect x="210.22" y="412.27" width="6.0" height="1.73" fill="#9d6cc9"/>
<rect x="210.22" y="413.99" width="6.0" height="1.73" fill="#fcc4a4"/>
<rect x="210.22" y="415.72" width="6.0" height="2.30" fill="#14a0a8"/>
<rect x="210.22" y="418.02" width="6.0" height="1.73" fill="#8fa2f8"/>
<rect x="210.22" y="419.75" width="6.0" height="1.15" fill="#c9a030"/>
<rect x="218.36" y="386.78" width="6.0" height="14.54" fill="#7b35a5"/>
<rect x="218.36" y="401.32" width="6.0" height="8.31" fill="#fde99a"/>
<rect x="218.36" y="409.63" width="6.0" height="2.37" fill="#4ecfdc"/>
<rect x="218.36" y="412.00" width="6.0" height="3.50" fill="#dcb8f0"/>
<rect x="218.36" y="415.50" width="6.0" height="0.72" fill="#f05a1e"/>
<rect x="218.36" y="416.22" width="6.0" height="0.72" fill="#fccc0a"/>
<rect x="218.36" y="416.94" width="6.0" height="0.72" fill="#3f50d8"/>
<rect x="218.36" y="417.66" width="6.0" height="0.54" fill="#f59a7a"/>
<rect x="218.36" y="418.20" width="6.0" height="0.54" fill="#9d6cc9"/>
<rect x="218.36" y="418.74" width="6.0" height="0.54" fill="#fcc4a4"/>
<rect x="218.36" y="419.28" width="6.0" height="0.72" fill="#14a0a8"/>
<rect x="218.36" y="420.00" width="6.0" height="0.54" fill="#8fa2f8"/>
<rect x="218.36" y="420.54" width="6.0" height="0.36" fill="#c9a030"/>
<rect x="226.49" y="353.84" width="6.0" height="37.09" fill="#7b35a5"/>
<rect x="226.49" y="390.93" width="6.0" height="8.31" fill="#fde99a"/>
<rect x="226.49" y="399.24" width="6.0" height="7.42" fill="#4ecfdc"/>
<rect x="226.49" y="406.66" width="6.0" height="3.50" fill="#dcb8f0"/>
<rect x="226.49" y="410.16" width="6.0" height="2.15" fill="#f05a1e"/>
<rect x="226.49" y="412.31" width="6.0" height="2.15" fill="#fccc0a"/>
<rect x="226.49" y="414.46" width="6.0" height="1.07" fill="#9d6cc9"/>
<rect x="226.49" y="415.53" width="6.0" height="1.61" fill="#e9a2c6"/>
<rect x="226.49" y="417.14" width="6.0" height="1.61" fill="#f59a7a"/>
<rect x="226.49" y="418.75" width="6.0" height="2.15" fill="#14a0a8"/>
<rect x="234.63" y="374.02" width="6.0" height="12.76" fill="#7b35a5"/>
<rect x="234.63" y="386.78" width="6.0" height="8.01" fill="#fde99a"/>
<rect x="234.63" y="394.79" width="6.0" height="3.86" fill="#4ecfdc"/>
<rect x="234.63" y="398.65" width="6.0" height="3.50" fill="#dcb8f0"/>
<rect x="234.63" y="402.15" width="6.0" height="2.50" fill="#f05a1e"/>
<rect x="234.63" y="404.65" width="6.0" height="2.50" fill="#fccc0a"/>
<rect x="234.63" y="407.15" width="6.0" height="2.50" fill="#3f50d8"/>
<rect x="234.63" y="409.65" width="6.0" height="1.88" fill="#f59a7a"/>
<rect x="234.63" y="411.52" width="6.0" height="1.88" fill="#9d6cc9"/>
<rect x="234.63" y="413.40" width="6.0" height="1.88" fill="#fcc4a4"/>
<rect x="234.63" y="415.27" width="6.0" height="2.50" fill="#14a0a8"/>
<rect x="234.63" y="417.77" width="6.0" height="1.88" fill="#8fa2f8"/>
<rect x="234.63" y="419.65" width="6.0" height="1.25" fill="#c9a030"/>
<rect x="242.76" y="356.81" width="6.0" height="36.50" fill="#7b35a5"/>
<rect x="242.76" y="393.31" width="6.0" height="8.01" fill="#fde99a"/>
<rect x="242.76" y="401.32" width="6.0" height="10.68" fill="#4ecfdc"/>
<rect x="242.76" y="412.00" width="6.0" height="3.50" fill="#dcb8f0"/>
<rect x="242.76" y="415.50" width="6.0" height="0.72" fill="#f05a1e"/>
<rect x="242.76" y="416.22" width="6.0" height="0.72" fill="#fccc0a"/>
<rect x="242.76" y="416.94" width="6.0" height="0.72" fill="#3f50d8"/>
<rect x="242.76" y="417.66" width="6.0" height="0.54" fill="#f59a7a"/>
<rect x="242.76" y="418.20" width="6.0" height="0.54" fill="#9d6cc9"/>
<rect x="242.76" y="418.74" width="6.0" height="0.54" fill="#fcc4a4"/>
<rect x="242.76" y="419.28" width="6.0" height="0.72" fill="#14a0a8"/>
<rect x="242.76" y="420.00" width="6.0" height="0.54" fill="#8fa2f8"/>
<rect x="242.76" y="420.54" width="6.0" height="0.36" fill="#c9a030"/>
<rect x="250.90" y="394.79" width="6.0" height="7.72" fill="#7b35a5"/>
<rect x="250.90" y="402.51" width="6.0" height="7.72" fill="#fde99a"/>
<rect x="250.90" y="410.22" width="6.0" height="2.37" fill="#4ecfdc"/>
<rect x="250.90" y="412.60" width="6.0" height="3.50" fill="#dcb8f0"/>
<rect x="250.90" y="416.10" width="6.0" height="0.96" fill="#f05a1e"/>
<rect x="250.90" y="417.06" width="6.0" height="0.96" fill="#fccc0a"/>
<rect x="250.90" y="418.02" width="6.0" height="0.48" fill="#9d6cc9"/>
<rect x="250.90" y="418.50" width="6.0" height="0.72" fill="#e9a2c6"/>
<rect x="250.90" y="419.22" width="6.0" height="0.72" fill="#f59a7a"/>
<rect x="250.90" y="419.94" width="6.0" height="0.96" fill="#14a0a8"/>
<rect x="259.04" y="374.02" width="6.0" height="18.99" fill="#7b35a5"/>
<rect x="259.04" y="393.01" width="6.0" height="7.72" fill="#fde99a"/>
<rect x="259.04" y="400.73" width="6.0" height="5.93" fill="#4ecfdc"/>
<rect x="259.04" y="406.66" width="6.0" height="3.50" fill="#dcb8f0"/>
<rect x="259.04" y="410.16" width="6.0" height="2.15" fill="#f05a1e"/>
<rect x="259.04" y="412.31" width="6.0" height="2.15" fill="#fccc0a"/>
<rect x="259.04" y="414.46" width="6.0" height="1.07" fill="#9d6cc9"/>
<rect x="259.04" y="415.53" width="6.0" height="1.61" fill="#e9a2c6"/>
<rect x="259.04" y="417.14" width="6.0" height="1.61" fill="#f59a7a"/>
<rect x="259.04" y="418.75" width="6.0" height="2.15" fill="#14a0a8"/>
<rect x="267.17" y="324.17" width="6.0" height="51.93" fill="#7b35a5"/>
<rect x="267.17" y="376.10" width="6.0" height="8.31" fill="#fde99a"/>
<rect x="267.17" y="384.41" width="6.0" height="15.73" fill="#4ecfdc"/>
<rect x="267.17" y="400.13" width="6.0" height="3.50" fill="#dcb8f0"/>
<rect x="267.17" y="403.63" width="6.0" height="2.30" fill="#f05a1e"/>
<rect x="267.17" y="405.94" width="6.0" height="2.30" fill="#fccc0a"/>
<rect x="267.17" y="408.24" width="6.0" height="2.30" fill="#3f50d8"/>
<rect x="267.17" y="410.54" width="6.0" height="1.73" fill="#f59a7a"/>
<rect x="267.17" y="412.27" width="6.0" height="1.73" fill="#9d6cc9"/>
<rect x="267.17" y="413.99" width="6.0" height="1.73" fill="#fcc4a4"/>
<rect x="267.17" y="415.72" width="6.0" height="2.30" fill="#14a0a8"/>
<rect x="267.17" y="418.02" width="6.0" height="1.73" fill="#8fa2f8"/>
<rect x="267.17" y="419.75" width="6.0" height="1.15" fill="#c9a030"/>
<rect x="275.31" y="387.37" width="6.0" height="14.84" fill="#7b35a5"/>
<rect x="275.31" y="402.21" width="6.0" height="8.01" fill="#fde99a"/>
<rect x="275.31" y="410.22" width="6.0" height="2.37" fill="#4ecfdc"/>
<rect x="275.31" y="412.60" width="6.0" height="3.50" fill="#dcb8f0"/>
<rect x="275.31" y="416.10" width="6.0" height="0.96" fill="#f05a1e"/>
<rect x="275.31" y="417.06" width="6.0" height="0.96" fill="#fccc0a"/>
<rect x="275.31" y="418.02" width="6.0" height="0.48" fill="#9d6cc9"/>
<rect x="275.31" y="418.50" width="6.0" height="0.72" fill="#e9a2c6"/>
<rect x="275.31" y="419.22" width="6.0" height="0.72" fill="#f59a7a"/>
<rect x="275.31" y="419.94" width="6.0" height="0.96" fill="#14a0a8"/>
<rect x="283.44" y="372.83" width="6.0" height="21.96" fill="#7b35a5"/>
<rect x="283.44" y="394.79" width="6.0" height="8.31" fill="#fde99a"/>
<rect x="283.44" y="403.10" width="6.0" height="4.15" fill="#4ecfdc"/>
<rect x="283.44" y="407.26" width="6.0" height="3.50" fill="#dcb8f0"/>
<rect x="283.44" y="410.76" width="6.0" height="2.03" fill="#f05a1e"/>
<rect x="283.44" y="412.78" width="6.0" height="2.03" fill="#fccc0a"/>
<rect x="283.44" y="414.81" width="6.0" height="1.01" fill="#9d6cc9"/>
<rect x="283.44" y="415.83" width="6.0" height="1.52" fill="#e9a2c6"/>
<rect x="283.44" y="417.35" width="6.0" height="1.52" fill="#f59a7a"/>
<rect x="283.44" y="418.87" width="6.0" height="2.03" fill="#14a0a8"/>
<rect x="291.58" y="371.05" width="6.0" height="19.88" fill="#7b35a5"/>
<rect x="291.58" y="390.93" width="6.0" height="8.31" fill="#fde99a"/>
<rect x="291.58" y="399.24" width="6.0" height="4.45" fill="#4ecfdc"/>
<rect x="291.58" y="403.69" width="6.0" height="3.50" fill="#dcb8f0"/>
<rect x="291.58" y="407.19" width="6.0" height="1.83" fill="#f05a1e"/>
<rect x="291.58" y="409.02" width="6.0" height="1.83" fill="#fccc0a"/>
<rect x="291.58" y="410.85" width="6.0" height="1.83" fill="#3f50d8"/>
<rect x="291.58" y="412.68" width="6.0" height="1.37" fill="#f59a7a"/>
<rect x="291.58" y="414.05" width="6.0" height="1.37" fill="#9d6cc9"/>
<rect x="291.58" y="415.42" width="6.0" height="1.37" fill="#fcc4a4"/>
<rect x="291.58" y="416.79" width="6.0" height="1.83" fill="#14a0a8"/>
<rect x="291.58" y="418.62" width="6.0" height="1.37" fill="#8fa2f8"/>
<rect x="291.58" y="419.99" width="6.0" height="0.91" fill="#c9a030"/>
<rect x="299.72" y="339.30" width="6.0" height="42.43" fill="#7b35a5"/>
<rect x="299.72" y="381.74" width="6.0" height="8.61" fill="#fde99a"/>
<rect x="299.72" y="390.34" width="6.0" height="10.98" fill="#4ecfdc"/>
<rect x="299.72" y="401.32" width="6.0" height="3.50" fill="#dcb8f0"/>
<rect x="299.72" y="404.82" width="6.0" height="2.14" fill="#f05a1e"/>
<rect x="299.72" y="406.96" width="6.0" height="2.14" fill="#fccc0a"/>
<rect x="299.72" y="409.11" width="6.0" height="2.14" fill="#3f50d8"/>
<rect x="299.72" y="411.25" width="6.0" height="1.61" fill="#f59a7a"/>
<rect x="299.72" y="412.86" width="6.0" height="1.61" fill="#9d6cc9"/>
<rect x="299.72" y="414.47" width="6.0" height="1.61" fill="#fcc4a4"/>
<rect x="299.72" y="416.08" width="6.0" height="2.14" fill="#14a0a8"/>
<rect x="299.72" y="418.22" width="6.0" height="1.61" fill="#8fa2f8"/>
<rect x="299.72" y="419.83" width="6.0" height="1.07" fill="#c9a030"/>
<rect x="307.85" y="390.93" width="6.0" height="8.61" fill="#7b35a5"/>
<rect x="307.85" y="399.54" width="6.0" height="8.01" fill="#fde99a"/>
<rect x="307.85" y="407.55" width="6.0" height="2.08" fill="#4ecfdc"/>
<rect x="307.85" y="409.63" width="6.0" height="3.50" fill="#dcb8f0"/>
<rect x="307.85" y="413.13" width="6.0" height="1.55" fill="#f05a1e"/>
<rect x="307.85" y="414.68" width="6.0" height="1.55" fill="#fccc0a"/>
<rect x="307.85" y="416.24" width="6.0" height="0.78" fill="#9d6cc9"/>
<rect x="307.85" y="417.01" width="6.0" height="1.17" fill="#e9a2c6"/>
<rect x="307.85" y="418.18" width="6.0" height="1.17" fill="#f59a7a"/>
<rect x="307.85" y="419.35" width="6.0" height="1.55" fill="#14a0a8"/>
<rect x="315.99" y="404.58" width="6.0" height="8.01" fill="#fde99a"/>
<rect x="315.99" y="412.60" width="6.0" height="1.48" fill="#4ecfdc"/>
<rect x="315.99" y="414.08" width="6.0" height="3.50" fill="#dcb8f0"/>
<rect x="315.99" y="417.58" width="6.0" height="0.44" fill="#f05a1e"/>
<rect x="315.99" y="418.02" width="6.0" height="0.44" fill="#fccc0a"/>
<rect x="315.99" y="418.47" width="6.0" height="0.44" fill="#3f50d8"/>
<rect x="315.99" y="418.91" width="6.0" height="0.33" fill="#f59a7a"/>
<rect x="315.99" y="419.24" width="6.0" height="0.33" fill="#9d6cc9"/>
<rect x="315.99" y="419.57" width="6.0" height="0.33" fill="#fcc4a4"/>
<rect x="315.99" y="419.90" width="6.0" height="0.44" fill="#14a0a8"/>
<rect x="315.99" y="420.35" width="6.0" height="0.33" fill="#8fa2f8"/>
<rect x="315.99" y="420.68" width="6.0" height="0.22" fill="#c9a030"/>
<rect x="324.12" y="383.52" width="6.0" height="13.65" fill="#7b35a5"/>
<rect x="324.12" y="397.17" width="6.0" height="8.01" fill="#fde99a"/>
<rect x="324.12" y="405.18" width="6.0" height="5.93" fill="#4ecfdc"/>
<rect x="324.12" y="411.11" width="6.0" height="3.50" fill="#dcb8f0"/>
<rect x="324.12" y="414.61" width="6.0" height="1.26" fill="#f05a1e"/>
<rect x="324.12" y="415.87" width="6.0" height="1.26" fill="#fccc0a"/>
<rect x="324.12" y="417.13" width="6.0" height="0.63" fill="#9d6cc9"/>
<rect x="324.12" y="417.76" width="6.0" height="0.94" fill="#e9a2c6"/>
<rect x="324.12" y="418.70" width="6.0" height="0.94" fill="#f59a7a"/>
<rect x="324.12" y="419.64" width="6.0" height="1.26" fill="#14a0a8"/>
<rect x="332.26" y="393.61" width="6.0" height="7.72" fill="#7b35a5"/>
<rect x="332.26" y="401.32" width="6.0" height="8.31" fill="#fde99a"/>
<rect x="332.26" y="409.63" width="6.0" height="2.97" fill="#4ecfdc"/>
<rect x="332.26" y="412.60" width="6.0" height="3.50" fill="#dcb8f0"/>
<rect x="332.26" y="416.10" width="6.0" height="0.96" fill="#f05a1e"/>
<rect x="332.26" y="417.06" width="6.0" height="0.96" fill="#fccc0a"/>
<rect x="332.26" y="418.02" width="6.0" height="0.48" fill="#9d6cc9"/>
<rect x="332.26" y="418.50" width="6.0" height="0.72" fill="#e9a2c6"/>
<rect x="332.26" y="419.22" width="6.0" height="0.72" fill="#f59a7a"/>
<rect x="332.26" y="419.94" width="6.0" height="0.96" fill="#14a0a8"/>
<rect x="340.40" y="330.10" width="6.0" height="45.70" fill="#7b35a5"/>
<rect x="340.40" y="375.80" width="6.0" height="8.61" fill="#fde99a"/>
<rect x="340.40" y="384.41" width="6.0" height="10.39" fill="#4ecfdc"/>
<rect x="340.40" y="394.79" width="6.0" height="3.50" fill="#dcb8f0"/>
<rect x="340.40" y="398.29" width="6.0" height="3.01" fill="#f05a1e"/>
<rect x="340.40" y="401.31" width="6.0" height="3.01" fill="#fccc0a"/>
<rect x="340.40" y="404.32" width="6.0" height="3.01" fill="#3f50d8"/>
<rect x="340.40" y="407.34" width="6.0" height="2.26" fill="#f59a7a"/>
<rect x="340.40" y="409.60" width="6.0" height="2.26" fill="#9d6cc9"/>
<rect x="340.40" y="411.86" width="6.0" height="2.26" fill="#fcc4a4"/>
<rect x="340.40" y="414.12" width="6.0" height="3.01" fill="#14a0a8"/>
<rect x="340.40" y="417.13" width="6.0" height="2.26" fill="#8fa2f8"/>
<rect x="340.40" y="419.39" width="6.0" height="1.51" fill="#c9a030"/>
<rect x="348.53" y="372.83" width="6.0" height="24.93" fill="#7b35a5"/>
<rect x="348.53" y="397.76" width="6.0" height="8.31" fill="#fde99a"/>
<rect x="348.53" y="406.07" width="6.0" height="5.04" fill="#4ecfdc"/>
<rect x="348.53" y="411.11" width="6.0" height="3.50" fill="#dcb8f0"/>
<rect x="348.53" y="414.61" width="6.0" height="1.26" fill="#f05a1e"/>
<rect x="348.53" y="415.87" width="6.0" height="1.26" fill="#fccc0a"/>
<rect x="348.53" y="417.13" width="6.0" height="0.63" fill="#9d6cc9"/>
<rect x="348.53" y="417.76" width="6.0" height="0.94" fill="#e9a2c6"/>
<rect x="348.53" y="418.70" width="6.0" height="0.94" fill="#f59a7a"/>
<rect x="348.53" y="419.64" width="6.0" height="1.26" fill="#14a0a8"/>
<rect x="356.67" y="365.71" width="6.0" height="24.93" fill="#7b35a5"/>
<rect x="356.67" y="390.64" width="6.0" height="8.61" fill="#fde99a"/>
<rect x="356.67" y="399.24" width="6.0" height="5.93" fill="#4ecfdc"/>
<rect x="356.67" y="405.18" width="6.0" height="3.50" fill="#dcb8f0"/>
<rect x="356.67" y="408.68" width="6.0" height="2.44" fill="#f05a1e"/>
<rect x="356.67" y="411.12" width="6.0" height="2.44" fill="#fccc0a"/>
<rect x="356.67" y="413.57" width="6.0" height="1.22" fill="#9d6cc9"/>
<rect x="356.67" y="414.79" width="6.0" height="1.83" fill="#e9a2c6"/>
<rect x="356.67" y="416.62" width="6.0" height="1.83" fill="#f59a7a"/>
<rect x="356.67" y="418.46" width="6.0" height="2.44" fill="#14a0a8"/>
<rect x="364.80" y="371.94" width="6.0" height="24.04" fill="#7b35a5"/>
<rect x="364.80" y="395.98" width="6.0" height="8.31" fill="#fde99a"/>
<rect x="364.80" y="404.29" width="6.0" height="9.79" fill="#4ecfdc"/>
<rect x="364.80" y="414.08" width="6.0" height="3.50" fill="#dcb8f0"/>
<rect x="364.80" y="417.58" width="6.0" height="0.44" fill="#f05a1e"/>
<rect x="364.80" y="418.02" width="6.0" height="0.44" fill="#fccc0a"/>
<rect x="364.80" y="418.47" width="6.0" height="0.44" fill="#3f50d8"/>
<rect x="364.80" y="418.91" width="6.0" height="0.33" fill="#f59a7a"/>
<rect x="364.80" y="419.24" width="6.0" height="0.33" fill="#9d6cc9"/>
<rect x="364.80" y="419.57" width="6.0" height="0.33" fill="#fcc4a4"/>
<rect x="364.80" y="419.90" width="6.0" height="0.44" fill="#14a0a8"/>
<rect x="364.80" y="420.35" width="6.0" height="0.33" fill="#8fa2f8"/>
<rect x="364.80" y="420.68" width="6.0" height="0.22" fill="#c9a030"/>
<rect x="372.94" y="390.64" width="6.0" height="13.06" fill="#7b35a5"/>
<rect x="372.94" y="403.69" width="6.0" height="8.90" fill="#fde99a"/>
<rect x="372.94" y="412.60" width="6.0" height="1.48" fill="#4ecfdc"/>
<rect x="372.94" y="414.08" width="6.0" height="3.50" fill="#dcb8f0"/>
<rect x="372.94" y="417.58" width="6.0" height="0.66" fill="#f05a1e"/>
<rect x="372.94" y="418.24" width="6.0" height="0.66" fill="#fccc0a"/>
<rect x="372.94" y="418.91" width="6.0" height="0.33" fill="#9d6cc9"/>
<rect x="372.94" y="419.24" width="6.0" height="0.50" fill="#e9a2c6"/>
<rect x="372.94" y="419.74" width="6.0" height="0.50" fill="#f59a7a"/>
<rect x="372.94" y="420.24" width="6.0" height="0.66" fill="#14a0a8"/>
<rect x="381.08" y="398.35" width="6.0" height="5.34" fill="#7b35a5"/>
<rect x="381.08" y="403.69" width="6.0" height="8.90" fill="#fde99a"/>
<rect x="381.08" y="412.60" width="6.0" height="1.48" fill="#4ecfdc"/>
<rect x="381.08" y="414.08" width="6.0" height="3.50" fill="#dcb8f0"/>
<rect x="381.08" y="417.58" width="6.0" height="0.66" fill="#f05a1e"/>
<rect x="381.08" y="418.24" width="6.0" height="0.66" fill="#fccc0a"/>
<rect x="381.08" y="418.91" width="6.0" height="0.33" fill="#9d6cc9"/>
<rect x="381.08" y="419.24" width="6.0" height="0.50" fill="#e9a2c6"/>
<rect x="381.08" y="419.74" width="6.0" height="0.50" fill="#f59a7a"/>
<rect x="381.08" y="420.24" width="6.0" height="0.66" fill="#14a0a8"/>
<rect x="389.21" y="311.71" width="6.0" height="66.47" fill="#7b35a5"/>
<rect x="389.21" y="378.18" width="6.0" height="8.61" fill="#fde99a"/>
<rect x="389.21" y="386.78" width="6.0" height="18.40" fill="#4ecfdc"/>
<rect x="389.21" y="405.18" width="6.0" height="3.50" fill="#dcb8f0"/>
<rect x="389.21" y="408.68" width="6.0" height="1.63" fill="#f05a1e"/>
<rect x="389.21" y="410.31" width="6.0" height="1.63" fill="#fccc0a"/>
<rect x="389.21" y="411.94" width="6.0" height="1.63" fill="#3f50d8"/>
<rect x="389.21" y="413.57" width="6.0" height="1.22" fill="#f59a7a"/>
<rect x="389.21" y="414.79" width="6.0" height="1.22" fill="#9d6cc9"/>
<rect x="389.21" y="416.01" width="6.0" height="1.22" fill="#fcc4a4"/>
<rect x="389.21" y="417.23" width="6.0" height="1.63" fill="#14a0a8"/>
<rect x="389.21" y="418.86" width="6.0" height="1.22" fill="#8fa2f8"/>
<rect x="389.21" y="420.09" width="6.0" height="0.81" fill="#c9a030"/>
<rect x="397.35" y="379.36" width="6.0" height="19.88" fill="#7b35a5"/>
<rect x="397.35" y="399.24" width="6.0" height="7.42" fill="#fde99a"/>
<rect x="397.35" y="406.66" width="6.0" height="4.45" fill="#4ecfdc"/>
<rect x="397.35" y="411.11" width="6.0" height="3.50" fill="#dcb8f0"/>
<rect x="397.35" y="414.61" width="6.0" height="1.26" fill="#f05a1e"/>
<rect x="397.35" y="415.87" width="6.0" height="1.26" fill="#fccc0a"/>
<rect x="397.35" y="417.13" width="6.0" height="0.63" fill="#9d6cc9"/>
<rect x="397.35" y="417.76" width="6.0" height="0.94" fill="#e9a2c6"/>
<rect x="397.35" y="418.70" width="6.0" height="0.94" fill="#f59a7a"/>
<rect x="397.35" y="419.64" width="6.0" height="1.26" fill="#14a0a8"/>
<rect x="405.48" y="389.45" width="6.0" height="13.35" fill="#7b35a5"/>
<rect x="405.48" y="402.80" width="6.0" height="8.31" fill="#fde99a"/>
<rect x="405.48" y="411.11" width="6.0" height="2.08" fill="#4ecfdc"/>
<rect x="405.48" y="413.19" width="6.0" height="3.50" fill="#dcb8f0"/>
<rect x="405.48" y="416.69" width="6.0" height="0.84" fill="#f05a1e"/>
<rect x="405.48" y="417.53" width="6.0" height="0.84" fill="#fccc0a"/>
<rect x="405.48" y="418.37" width="6.0" height="0.42" fill="#9d6cc9"/>
<rect x="405.48" y="418.79" width="6.0" height="0.63" fill="#e9a2c6"/>
<rect x="405.48" y="419.43" width="6.0" height="0.63" fill="#f59a7a"/>
<rect x="405.48" y="420.06" width="6.0" height="0.84" fill="#14a0a8"/>
<rect x="413.62" y="353.25" width="6.0" height="36.50" fill="#7b35a5"/>
<rect x="413.62" y="389.75" width="6.0" height="8.01" fill="#fde99a"/>
<rect x="413.62" y="397.76" width="6.0" height="9.50" fill="#4ecfdc"/>
<rect x="413.62" y="407.26" width="6.0" height="3.50" fill="#dcb8f0"/>
<rect x="413.62" y="410.76" width="6.0" height="1.35" fill="#f05a1e"/>
<rect x="413.62" y="412.11" width="6.0" height="1.35" fill="#fccc0a"/>
<rect x="413.62" y="413.46" width="6.0" height="1.35" fill="#3f50d8"/>
<rect x="413.62" y="414.81" width="6.0" height="1.01" fill="#f59a7a"/>
<rect x="413.62" y="415.83" width="6.0" height="1.01" fill="#9d6cc9"/>
<rect x="413.62" y="416.84" width="6.0" height="1.01" fill="#fcc4a4"/>
<rect x="413.62" y="417.86" width="6.0" height="1.35" fill="#14a0a8"/>
<rect x="413.62" y="419.21" width="6.0" height="1.01" fill="#8fa2f8"/>
<rect x="413.62" y="420.22" width="6.0" height="0.68" fill="#c9a030"/>
<rect x="421.76" y="340.19" width="6.0" height="47.18" fill="#7b35a5"/>
<rect x="421.76" y="387.37" width="6.0" height="8.31" fill="#fde99a"/>
<rect x="421.76" y="395.68" width="6.0" height="11.57" fill="#4ecfdc"/>
<rect x="421.76" y="407.26" width="6.0" height="3.50" fill="#dcb8f0"/>
<rect x="421.76" y="410.76" width="6.0" height="2.03" fill="#f05a1e"/>
<rect x="421.76" y="412.78" width="6.0" height="2.03" fill="#fccc0a"/>
<rect x="421.76" y="414.81" width="6.0" height="1.01" fill="#9d6cc9"/>
<rect x="421.76" y="415.83" width="6.0" height="1.52" fill="#e9a2c6"/>
<rect x="421.76" y="417.35" width="6.0" height="1.52" fill="#f59a7a"/>
<rect x="421.76" y="418.87" width="6.0" height="2.03" fill="#14a0a8"/>
<rect x="429.89" y="351.77" width="6.0" height="30.27" fill="#7b35a5"/>
<rect x="429.89" y="382.03" width="6.0" height="8.31" fill="#fde99a"/>
<rect x="429.89" y="390.34" width="6.0" height="6.82" fill="#4ecfdc"/>
<rect x="429.89" y="397.17" width="6.0" height="3.50" fill="#dcb8f0"/>
<rect x="429.89" y="400.67" width="6.0" height="2.70" fill="#f05a1e"/>
<rect x="429.89" y="403.36" width="6.0" height="2.70" fill="#fccc0a"/>
<rect x="429.89" y="406.06" width="6.0" height="2.70" fill="#3f50d8"/>
<rect x="429.89" y="408.76" width="6.0" height="2.02" fill="#f59a7a"/>
<rect x="429.89" y="410.78" width="6.0" height="2.02" fill="#9d6cc9"/>
<rect x="429.89" y="412.81" width="6.0" height="2.02" fill="#fcc4a4"/>
<rect x="429.89" y="414.83" width="6.0" height="2.70" fill="#14a0a8"/>
<rect x="429.89" y="417.53" width="6.0" height="2.02" fill="#8fa2f8"/>
<rect x="429.89" y="419.55" width="6.0" height="1.35" fill="#c9a030"/>
<rect x="438.03" y="386.78" width="6.0" height="13.06" fill="#7b35a5"/>
<rect x="438.03" y="399.84" width="6.0" height="8.31" fill="#fde99a"/>
<rect x="438.03" y="408.15" width="6.0" height="2.97" fill="#4ecfdc"/>
<rect x="438.03" y="411.11" width="6.0" height="3.50" fill="#dcb8f0"/>
<rect x="438.03" y="414.61" width="6.0" height="0.84" fill="#f05a1e"/>
<rect x="438.03" y="415.45" width="6.0" height="0.84" fill="#fccc0a"/>
<rect x="438.03" y="416.29" width="6.0" height="0.84" fill="#3f50d8"/>
<rect x="438.03" y="417.13" width="6.0" height="0.63" fill="#f59a7a"/>
<rect x="438.03" y="417.76" width="6.0" height="0.63" fill="#9d6cc9"/>
<rect x="438.03" y="418.39" width="6.0" height="0.63" fill="#fcc4a4"/>
<rect x="438.03" y="419.01" width="6.0" height="0.84" fill="#14a0a8"/>
<rect x="438.03" y="419.85" width="6.0" height="0.63" fill="#8fa2f8"/>
<rect x="438.03" y="420.48" width="6.0" height="0.42" fill="#c9a030"/>
<rect x="446.16" y="355.62" width="6.0" height="37.39" fill="#7b35a5"/>
<rect x="446.16" y="393.01" width="6.0" height="7.72" fill="#fde99a"/>
<rect x="446.16" y="400.73" width="6.0" height="11.87" fill="#4ecfdc"/>
<rect x="446.16" y="412.60" width="6.0" height="3.50" fill="#dcb8f0"/>
<rect x="446.16" y="416.10" width="6.0" height="0.96" fill="#f05a1e"/>
<rect x="446.16" y="417.06" width="6.0" height="0.96" fill="#fccc0a"/>
<rect x="446.16" y="418.02" width="6.0" height="0.48" fill="#9d6cc9"/>
<rect x="446.16" y="418.50" width="6.0" height="0.72" fill="#e9a2c6"/>
<rect x="446.16" y="419.22" width="6.0" height="0.72" fill="#f59a7a"/>
<rect x="446.16" y="419.94" width="6.0" height="0.96" fill="#14a0a8"/>
<rect x="454.30" y="397.17" width="6.0" height="6.53" fill="#7b35a5"/>
<rect x="454.30" y="403.69" width="6.0" height="7.42" fill="#fde99a"/>
<rect x="454.30" y="411.11" width="6.0" height="2.08" fill="#4ecfdc"/>
<rect x="454.30" y="413.19" width="6.0" height="3.50" fill="#dcb8f0"/>
<rect x="454.30" y="416.69" width="6.0" height="0.84" fill="#f05a1e"/>
<rect x="454.30" y="417.53" width="6.0" height="0.84" fill="#fccc0a"/>
<rect x="454.30" y="418.37" width="6.0" height="0.42" fill="#9d6cc9"/>
<rect x="454.30" y="418.79" width="6.0" height="0.63" fill="#e9a2c6"/>
<rect x="454.30" y="419.43" width="6.0" height="0.63" fill="#f59a7a"/>
<rect x="454.30" y="420.06" width="6.0" height="0.84" fill="#14a0a8"/>
<rect x="462.44" y="334.85" width="6.0" height="45.99" fill="#7b35a5"/>
<rect x="462.44" y="380.85" width="6.0" height="8.61" fill="#fde99a"/>
<rect x="462.44" y="389.45" width="6.0" height="12.76" fill="#4ecfdc"/>
<rect x="462.44" y="402.21" width="6.0" height="3.50" fill="#dcb8f0"/>
<rect x="462.44" y="405.71" width="6.0" height="2.03" fill="#f05a1e"/>
<rect x="462.44" y="407.74" width="6.0" height="2.03" fill="#fccc0a"/>
<rect x="462.44" y="409.76" width="6.0" height="2.03" fill="#3f50d8"/>
<rect x="462.44" y="411.79" width="6.0" height="1.52" fill="#f59a7a"/>
<rect x="462.44" y="413.31" width="6.0" height="1.52" fill="#9d6cc9"/>
<rect x="462.44" y="414.82" width="6.0" height="1.52" fill="#fcc4a4"/>
<rect x="462.44" y="416.34" width="6.0" height="2.03" fill="#14a0a8"/>
<rect x="462.44" y="418.37" width="6.0" height="1.52" fill="#8fa2f8"/>
<rect x="462.44" y="419.89" width="6.0" height="1.01" fill="#c9a030"/>
<rect x="470.57" y="323.58" width="6.0" height="53.41" fill="#7b35a5"/>
<rect x="470.57" y="376.99" width="6.0" height="8.31" fill="#fde99a"/>
<rect x="470.57" y="385.30" width="6.0" height="11.87" fill="#4ecfdc"/>
<rect x="470.57" y="397.17" width="6.0" height="3.50" fill="#dcb8f0"/>
<rect x="470.57" y="400.67" width="6.0" height="2.70" fill="#f05a1e"/>
<rect x="470.57" y="403.36" width="6.0" height="2.70" fill="#fccc0a"/>
<rect x="470.57" y="406.06" width="6.0" height="2.70" fill="#3f50d8"/>
<rect x="470.57" y="408.76" width="6.0" height="2.02" fill="#f59a7a"/>
<rect x="470.57" y="410.78" width="6.0" height="2.02" fill="#9d6cc9"/>
<rect x="470.57" y="412.81" width="6.0" height="2.02" fill="#fcc4a4"/>
<rect x="470.57" y="414.83" width="6.0" height="2.70" fill="#14a0a8"/>
<rect x="470.57" y="417.53" width="6.0" height="2.02" fill="#8fa2f8"/>
<rect x="470.57" y="419.55" width="6.0" height="1.35" fill="#c9a030"/>
<rect x="478.71" y="378.47" width="6.0" height="8.90" fill="#7b35a5"/>
<rect x="478.71" y="387.37" width="6.0" height="8.01" fill="#fde99a"/>
<rect x="478.71" y="395.39" width="6.0" height="2.37" fill="#4ecfdc"/>
<rect x="478.71" y="397.76" width="6.0" height="3.50" fill="#dcb8f0"/>
<rect x="478.71" y="401.26" width="6.0" height="2.62" fill="#f05a1e"/>
<rect x="478.71" y="403.88" width="6.0" height="2.62" fill="#fccc0a"/>
<rect x="478.71" y="406.50" width="6.0" height="2.62" fill="#3f50d8"/>
<rect x="478.71" y="409.12" width="6.0" height="1.96" fill="#f59a7a"/>
<rect x="478.71" y="411.08" width="6.0" height="1.96" fill="#9d6cc9"/>
<rect x="478.71" y="413.04" width="6.0" height="1.96" fill="#fcc4a4"/>
<rect x="478.71" y="415.01" width="6.0" height="2.62" fill="#14a0a8"/>
<rect x="478.71" y="417.63" width="6.0" height="1.96" fill="#8fa2f8"/>
<rect x="478.71" y="419.59" width="6.0" height="1.31" fill="#c9a030"/>
<rect x="486.84" y="385.30" width="6.0" height="11.87" fill="#7b35a5"/>
<rect x="486.84" y="397.17" width="6.0" height="8.01" fill="#fde99a"/>
<rect x="486.84" y="405.18" width="6.0" height="1.48" fill="#4ecfdc"/>
<rect x="486.84" y="406.66" width="6.0" height="3.50" fill="#dcb8f0"/>
<rect x="486.84" y="410.16" width="6.0" height="1.43" fill="#f05a1e"/>
<rect x="486.84" y="411.59" width="6.0" height="1.43" fill="#fccc0a"/>
<rect x="486.84" y="413.03" width="6.0" height="1.43" fill="#3f50d8"/>
<rect x="486.84" y="414.46" width="6.0" height="1.07" fill="#f59a7a"/>
<rect x="486.84" y="415.53" width="6.0" height="1.07" fill="#9d6cc9"/>
<rect x="486.84" y="416.60" width="6.0" height="1.07" fill="#fcc4a4"/>
<rect x="486.84" y="417.68" width="6.0" height="1.43" fill="#14a0a8"/>
<rect x="486.84" y="419.11" width="6.0" height="1.07" fill="#8fa2f8"/>
<rect x="486.84" y="420.18" width="6.0" height="0.72" fill="#c9a030"/>
<rect x="494.98" y="363.04" width="6.0" height="27.60" fill="#7b35a5"/>
<rect x="494.98" y="390.64" width="6.0" height="8.01" fill="#fde99a"/>
<rect x="494.98" y="398.65" width="6.0" height="8.01" fill="#4ecfdc"/>
<rect x="494.98" y="406.66" width="6.0" height="3.50" fill="#dcb8f0"/>
<rect x="494.98" y="410.16" width="6.0" height="2.15" fill="#f05a1e"/>
<rect x="494.98" y="412.31" width="6.0" height="2.15" fill="#fccc0a"/>
<rect x="494.98" y="414.46" width="6.0" height="1.07" fill="#9d6cc9"/>
<rect x="494.98" y="415.53" width="6.0" height="1.61" fill="#e9a2c6"/>
<rect x="494.98" y="417.14" width="6.0" height="1.61" fill="#f59a7a"/>
<rect x="494.98" y="418.75" width="6.0" height="2.15" fill="#14a0a8"/>
<rect x="503.12" y="365.42" width="6.0" height="27.60" fill="#7b35a5"/>
<rect x="503.12" y="393.01" width="6.0" height="7.72" fill="#fde99a"/>
<rect x="503.12" y="400.73" width="6.0" height="5.93" fill="#4ecfdc"/>
<rect x="503.12" y="406.66" width="6.0" height="3.50" fill="#dcb8f0"/>
<rect x="503.12" y="410.16" width="6.0" height="2.15" fill="#f05a1e"/>
<rect x="503.12" y="412.31" width="6.0" height="2.15" fill="#fccc0a"/>
<rect x="503.12" y="414.46" width="6.0" height="1.07" fill="#9d6cc9"/>
<rect x="503.12" y="415.53" width="6.0" height="1.61" fill="#e9a2c6"/>
<rect x="503.12" y="417.14" width="6.0" height="1.61" fill="#f59a7a"/>
<rect x="503.12" y="418.75" width="6.0" height="2.15" fill="#14a0a8"/>
<rect x="511.25" y="384.41" width="6.0" height="15.73" fill="#7b35a5"/>
<rect x="511.25" y="400.13" width="6.0" height="8.01" fill="#fde99a"/>
<rect x="511.25" y="408.15" width="6.0" height="2.97" fill="#4ecfdc"/>
<rect x="511.25" y="411.11" width="6.0" height="3.50" fill="#dcb8f0"/>
<rect x="511.25" y="414.61" width="6.0" height="0.84" fill="#f05a1e"/>
<rect x="511.25" y="415.45" width="6.0" height="0.84" fill="#fccc0a"/>
<rect x="511.25" y="416.29" width="6.0" height="0.84" fill="#3f50d8"/>
<rect x="511.25" y="417.13" width="6.0" height="0.63" fill="#f59a7a"/>
<rect x="511.25" y="417.76" width="6.0" height="0.63" fill="#9d6cc9"/>
<rect x="511.25" y="418.39" width="6.0" height="0.63" fill="#fcc4a4"/>
<rect x="511.25" y="419.01" width="6.0" height="0.84" fill="#14a0a8"/>
<rect x="511.25" y="419.85" width="6.0" height="0.63" fill="#8fa2f8"/>
<rect x="511.25" y="420.48" width="6.0" height="0.42" fill="#c9a030"/>
<rect x="519.39" y="349.09" width="6.0" height="36.80" fill="#7b35a5"/>
<rect x="519.39" y="385.89" width="6.0" height="8.01" fill="#fde99a"/>
<rect x="519.39" y="393.90" width="6.0" height="7.42" fill="#4ecfdc"/>
<rect x="519.39" y="401.32" width="6.0" height="3.50" fill="#dcb8f0"/>
<rect x="519.39" y="404.82" width="6.0" height="2.14" fill="#f05a1e"/>
<rect x="519.39" y="406.96" width="6.0" height="2.14" fill="#fccc0a"/>
<rect x="519.39" y="409.11" width="6.0" height="2.14" fill="#3f50d8"/>
<rect x="519.39" y="411.25" width="6.0" height="1.61" fill="#f59a7a"/>
<rect x="519.39" y="412.86" width="6.0" height="1.61" fill="#9d6cc9"/>
<rect x="519.39" y="414.47" width="6.0" height="1.61" fill="#fcc4a4"/>
<rect x="519.39" y="416.08" width="6.0" height="2.14" fill="#14a0a8"/>
<rect x="519.39" y="418.22" width="6.0" height="1.61" fill="#8fa2f8"/>
<rect x="519.39" y="419.83" width="6.0" height="1.07" fill="#c9a030"/>
<rect x="527.52" y="351.77" width="6.0" height="43.03" fill="#7b35a5"/>
<rect x="527.52" y="394.79" width="6.0" height="5.93" fill="#fde99a"/>
<rect x="527.52" y="400.73" width="6.0" height="12.46" fill="#4ecfdc"/>
<rect x="527.52" y="413.19" width="6.0" height="3.50" fill="#dcb8f0"/>
<rect x="527.52" y="416.69" width="6.0" height="0.84" fill="#f05a1e"/>
<rect x="527.52" y="417.53" width="6.0" height="0.84" fill="#fccc0a"/>
<rect x="527.52" y="418.37" width="6.0" height="0.42" fill="#9d6cc9"/>
<rect x="527.52" y="418.79" width="6.0" height="0.63" fill="#e9a2c6"/>
<rect x="527.52" y="419.43" width="6.0" height="0.63" fill="#f59a7a"/>
<rect x="527.52" y="420.06" width="6.0" height="0.84" fill="#14a0a8"/>
<rect x="535.66" y="389.45" width="6.0" height="6.82" fill="#7b35a5"/>
<rect x="535.66" y="396.28" width="6.0" height="8.90" fill="#fde99a"/>
<rect x="535.66" y="405.18" width="6.0" height="1.48" fill="#4ecfdc"/>
<rect x="535.66" y="406.66" width="6.0" height="3.50" fill="#dcb8f0"/>
<rect x="535.66" y="410.16" width="6.0" height="1.43" fill="#f05a1e"/>
<rect x="535.66" y="411.59" width="6.0" height="1.43" fill="#fccc0a"/>
<rect x="535.66" y="413.03" width="6.0" height="1.43" fill="#3f50d8"/>
<rect x="535.66" y="414.46" width="6.0" height="1.07" fill="#f59a7a"/>
<rect x="535.66" y="415.53" width="6.0" height="1.07" fill="#9d6cc9"/>
<rect x="535.66" y="416.60" width="6.0" height="1.07" fill="#fcc4a4"/>
<rect x="535.66" y="417.68" width="6.0" height="1.43" fill="#14a0a8"/>
<rect x="535.66" y="419.11" width="6.0" height="1.07" fill="#8fa2f8"/>
<rect x="535.66" y="420.18" width="6.0" height="0.72" fill="#c9a030"/>
<rect x="543.80" y="384.70" width="6.0" height="12.46" fill="#7b35a5"/>
<rect x="543.80" y="397.17" width="6.0" height="8.01" fill="#fde99a"/>
<rect x="543.80" y="405.18" width="6.0" height="1.48" fill="#4ecfdc"/>
<rect x="543.80" y="406.66" width="6.0" height="3.50" fill="#dcb8f0"/>
<rect x="543.80" y="410.16" width="6.0" height="2.15" fill="#f05a1e"/>
<rect x="543.80" y="412.31" width="6.0" height="2.15" fill="#fccc0a"/>
<rect x="543.80" y="414.46" width="6.0" height="1.07" fill="#9d6cc9"/>
<rect x="543.80" y="415.53" width="6.0" height="1.61" fill="#e9a2c6"/>
<rect x="543.80" y="417.14" width="6.0" height="1.61" fill="#f59a7a"/>
<rect x="543.80" y="418.75" width="6.0" height="2.15" fill="#14a0a8"/>
<rect x="551.93" y="333.96" width="6.0" height="50.45" fill="#7b35a5"/>
<rect x="551.93" y="384.41" width="6.0" height="8.90" fill="#fde99a"/>
<rect x="551.93" y="393.31" width="6.0" height="13.35" fill="#4ecfdc"/>
<rect x="551.93" y="406.66" width="6.0" height="3.50" fill="#dcb8f0"/>
<rect x="551.93" y="410.16" width="6.0" height="2.15" fill="#f05a1e"/>
<rect x="551.93" y="412.31" width="6.0" height="2.15" fill="#fccc0a"/>
<rect x="551.93" y="414.46" width="6.0" height="1.07" fill="#9d6cc9"/>
<rect x="551.93" y="415.53" width="6.0" height="1.61" fill="#e9a2c6"/>
<rect x="551.93" y="417.14" width="6.0" height="1.61" fill="#f59a7a"/>
<rect x="551.93" y="418.75" width="6.0" height="2.15" fill="#14a0a8"/>
<rect x="560.07" y="385.30" width="6.0" height="13.95" fill="#7b35a5"/>
<rect x="560.07" y="399.24" width="6.0" height="8.90" fill="#fde99a"/>
<rect x="560.07" y="408.15" width="6.0" height="2.97" fill="#4ecfdc"/>
<rect x="560.07" y="411.11" width="6.0" height="3.50" fill="#dcb8f0"/>
<rect x="560.07" y="414.61" width="6.0" height="0.84" fill="#f05a1e"/>
<rect x="560.07" y="415.45" width="6.0" height="0.84" fill="#fccc0a"/>
<rect x="560.07" y="416.29" width="6.0" height="0.84" fill="#3f50d8"/>
<rect x="560.07" y="417.13" width="6.0" height="0.63" fill="#f59a7a"/>
<rect x="560.07" y="417.76" width="6.0" height="0.63" fill="#9d6cc9"/>
<rect x="560.07" y="418.39" width="6.0" height="0.63" fill="#fcc4a4"/>
<rect x="560.07" y="419.01" width="6.0" height="0.84" fill="#14a0a8"/>
<rect x="560.07" y="419.85" width="6.0" height="0.63" fill="#8fa2f8"/>
<rect x="560.07" y="420.48" width="6.0" height="0.42" fill="#c9a030"/>
<rect x="568.20" y="350.28" width="6.0" height="37.09" fill="#7b35a5"/>
<rect x="568.20" y="387.37" width="6.0" height="8.31" fill="#fde99a"/>
<rect x="568.20" y="395.68" width="6.0" height="8.01" fill="#4ecfdc"/>
<rect x="568.20" y="403.69" width="6.0" height="3.50" fill="#dcb8f0"/>
<rect x="568.20" y="407.19" width="6.0" height="1.83" fill="#f05a1e"/>
<rect x="568.20" y="409.02" width="6.0" height="1.83" fill="#fccc0a"/>
<rect x="568.20" y="410.85" width="6.0" height="1.83" fill="#3f50d8"/>
<rect x="568.20" y="412.68" width="6.0" height="1.37" fill="#f59a7a"/>
<rect x="568.20" y="414.05" width="6.0" height="1.37" fill="#9d6cc9"/>
<rect x="568.20" y="415.42" width="6.0" height="1.37" fill="#fcc4a4"/>
<rect x="568.20" y="416.79" width="6.0" height="1.83" fill="#14a0a8"/>
<rect x="568.20" y="418.62" width="6.0" height="1.37" fill="#8fa2f8"/>
<rect x="568.20" y="419.99" width="6.0" height="0.91" fill="#c9a030"/>
<rect x="576.34" y="382.33" width="6.0" height="12.46" fill="#7b35a5"/>
<rect x="576.34" y="394.79" width="6.0" height="8.31" fill="#fde99a"/>
<rect x="576.34" y="403.10" width="6.0" height="3.56" fill="#4ecfdc"/>
<rect x="576.34" y="406.66" width="6.0" height="3.50" fill="#dcb8f0"/>
<rect x="576.34" y="410.16" width="6.0" height="2.15" fill="#f05a1e"/>
<rect x="576.34" y="412.31" width="6.0" height="2.15" fill="#fccc0a"/>
<rect x="576.34" y="414.46" width="6.0" height="1.07" fill="#9d6cc9"/>
<rect x="576.34" y="415.53" width="6.0" height="1.61" fill="#e9a2c6"/>
<rect x="576.34" y="417.14" width="6.0" height="1.61" fill="#f59a7a"/>
<rect x="576.34" y="418.75" width="6.0" height="2.15" fill="#14a0a8"/>
<rect x="584.48" y="377.88" width="6.0" height="19.88" fill="#7b35a5"/>
<rect x="584.48" y="397.76" width="6.0" height="8.31" fill="#fde99a"/>
<rect x="584.48" y="406.07" width="6.0" height="6.53" fill="#4ecfdc"/>
<rect x="584.48" y="412.60" width="6.0" height="3.50" fill="#dcb8f0"/>
<rect x="584.48" y="416.10" width="6.0" height="0.64" fill="#f05a1e"/>
<rect x="584.48" y="416.74" width="6.0" height="0.64" fill="#fccc0a"/>
<rect x="584.48" y="417.38" width="6.0" height="0.64" fill="#3f50d8"/>
<rect x="584.48" y="418.02" width="6.0" height="0.48" fill="#f59a7a"/>
<rect x="584.48" y="418.50" width="6.0" height="0.48" fill="#9d6cc9"/>
<rect x="584.48" y="418.98" width="6.0" height="0.48" fill="#fcc4a4"/>
<rect x="584.48" y="419.46" width="6.0" height="0.64" fill="#14a0a8"/>
<rect x="584.48" y="420.10" width="6.0" height="0.48" fill="#8fa2f8"/>
<rect x="584.48" y="420.58" width="6.0" height="0.32" fill="#c9a030"/>
<rect x="592.61" y="356.81" width="6.0" height="33.83" fill="#7b35a5"/>
<rect x="592.61" y="390.64" width="6.0" height="8.31" fill="#fde99a"/>
<rect x="592.61" y="398.95" width="6.0" height="7.72" fill="#4ecfdc"/>
<rect x="592.61" y="406.66" width="6.0" height="3.50" fill="#dcb8f0"/>
<rect x="592.61" y="410.16" width="6.0" height="2.15" fill="#f05a1e"/>
<rect x="592.61" y="412.31" width="6.0" height="2.15" fill="#fccc0a"/>
<rect x="592.61" y="414.46" width="6.0" height="1.07" fill="#9d6cc9"/>
<rect x="592.61" y="415.53" width="6.0" height="1.61" fill="#e9a2c6"/>
<rect x="592.61" y="417.14" width="6.0" height="1.61" fill="#f59a7a"/>
<rect x="592.61" y="418.75" width="6.0" height="2.15" fill="#14a0a8"/>
<rect x="600.75" y="365.12" width="6.0" height="24.33" fill="#7b35a5"/>
<rect x="600.75" y="389.45" width="6.0" height="8.31" fill="#fde99a"/>
<rect x="600.75" y="397.76" width="6.0" height="7.42" fill="#4ecfdc"/>
<rect x="600.75" y="405.18" width="6.0" height="3.50" fill="#dcb8f0"/>
<rect x="600.75" y="408.68" width="6.0" height="2.44" fill="#f05a1e"/>
<rect x="600.75" y="411.12" width="6.0" height="2.44" fill="#fccc0a"/>
<rect x="600.75" y="413.57" width="6.0" height="1.22" fill="#9d6cc9"/>
<rect x="600.75" y="414.79" width="6.0" height="1.83" fill="#e9a2c6"/>
<rect x="600.75" y="416.62" width="6.0" height="1.83" fill="#f59a7a"/>
<rect x="600.75" y="418.46" width="6.0" height="2.44" fill="#14a0a8"/>
<rect x="608.88" y="386.78" width="6.0" height="15.43" fill="#7b35a5"/>
<rect x="608.88" y="402.21" width="6.0" height="8.90" fill="#fde99a"/>
<rect x="608.88" y="411.11" width="6.0" height="2.08" fill="#4ecfdc"/>
<rect x="608.88" y="413.19" width="6.0" height="3.50" fill="#dcb8f0"/>
<rect x="608.88" y="416.69" width="6.0" height="0.56" fill="#f05a1e"/>
<rect x="608.88" y="417.25" width="6.0" height="0.56" fill="#fccc0a"/>
<rect x="608.88" y="417.81" width="6.0" height="0.56" fill="#3f50d8"/>
<rect x="608.88" y="418.37" width="6.0" height="0.42" fill="#f59a7a"/>
<rect x="608.88" y="418.79" width="6.0" height="0.42" fill="#9d6cc9"/>
<rect x="608.88" y="419.22" width="6.0" height="0.42" fill="#fcc4a4"/>
<rect x="608.88" y="419.64" width="6.0" height="0.56" fill="#14a0a8"/>
<rect x="608.88" y="420.20" width="6.0" height="0.42" fill="#8fa2f8"/>
<rect x="608.88" y="420.62" width="6.0" height="0.28" fill="#c9a030"/>
<rect x="617.02" y="374.02" width="6.0" height="18.99" fill="#7b35a5"/>
<rect x="617.02" y="393.01" width="6.0" height="7.72" fill="#fde99a"/>
<rect x="617.02" y="400.73" width="6.0" height="5.93" fill="#4ecfdc"/>
<rect x="617.02" y="406.66" width="6.0" height="3.50" fill="#dcb8f0"/>
<rect x="617.02" y="410.16" width="6.0" height="2.15" fill="#f05a1e"/>
<rect x="617.02" y="412.31" width="6.0" height="2.15" fill="#fccc0a"/>
<rect x="617.02" y="414.46" width="6.0" height="1.07" fill="#9d6cc9"/>
<rect x="617.02" y="415.53" width="6.0" height="1.61" fill="#e9a2c6"/>
<rect x="617.02" y="417.14" width="6.0" height="1.61" fill="#f59a7a"/>
<rect x="617.02" y="418.75" width="6.0" height="2.15" fill="#14a0a8"/>
<rect x="625.16" y="393.90" width="6.0" height="7.42" fill="#7b35a5"/>
<rect x="625.16" y="401.32" width="6.0" height="8.31" fill="#fde99a"/>
<rect x="625.16" y="409.63" width="6.0" height="2.37" fill="#4ecfdc"/>
<rect x="625.16" y="412.00" width="6.0" height="3.50" fill="#dcb8f0"/>
<rect x="625.16" y="415.50" width="6.0" height="1.08" fill="#f05a1e"/>
<rect x="625.16" y="416.58" width="6.0" height="1.08" fill="#fccc0a"/>
<rect x="625.16" y="417.66" width="6.0" height="0.54" fill="#9d6cc9"/>
<rect x="625.16" y="418.20" width="6.0" height="0.81" fill="#e9a2c6"/>
<rect x="625.16" y="419.01" width="6.0" height="0.81" fill="#f59a7a"/>
<rect x="625.16" y="419.82" width="6.0" height="1.08" fill="#14a0a8"/>
<rect x="633.29" y="331.59" width="6.0" height="53.12" fill="#7b35a5"/>
<rect x="633.29" y="384.70" width="6.0" height="8.31" fill="#fde99a"/>
<rect x="633.29" y="393.01" width="6.0" height="13.65" fill="#4ecfdc"/>
<rect x="633.29" y="406.66" width="6.0" height="3.50" fill="#dcb8f0"/>
<rect x="633.29" y="410.16" width="6.0" height="1.43" fill="#f05a1e"/>
<rect x="633.29" y="411.59" width="6.0" height="1.43" fill="#fccc0a"/>
<rect x="633.29" y="413.03" width="6.0" height="1.43" fill="#3f50d8"/>
<rect x="633.29" y="414.46" width="6.0" height="1.07" fill="#f59a7a"/>
<rect x="633.29" y="415.53" width="6.0" height="1.07" fill="#9d6cc9"/>
<rect x="633.29" y="416.60" width="6.0" height="1.07" fill="#fcc4a4"/>
<rect x="633.29" y="417.68" width="6.0" height="1.43" fill="#14a0a8"/>
<rect x="633.29" y="419.11" width="6.0" height="1.07" fill="#8fa2f8"/>
<rect x="633.29" y="420.18" width="6.0" height="0.72" fill="#c9a030"/>
<rect x="641.43" y="333.96" width="6.0" height="44.51" fill="#7b35a5"/>
<rect x="641.43" y="378.47" width="6.0" height="8.31" fill="#fde99a"/>
<rect x="641.43" y="386.78" width="6.0" height="13.35" fill="#4ecfdc"/>
<rect x="641.43" y="400.13" width="6.0" height="3.50" fill="#dcb8f0"/>
<rect x="641.43" y="403.63" width="6.0" height="2.30" fill="#f05a1e"/>
<rect x="641.43" y="405.94" width="6.0" height="2.30" fill="#fccc0a"/>
<rect x="641.43" y="408.24" width="6.0" height="2.30" fill="#3f50d8"/>
<rect x="641.43" y="410.54" width="6.0" height="1.73" fill="#f59a7a"/>
<rect x="641.43" y="412.27" width="6.0" height="1.73" fill="#9d6cc9"/>
<rect x="641.43" y="413.99" width="6.0" height="1.73" fill="#fcc4a4"/>
<rect x="641.43" y="415.72" width="6.0" height="2.30" fill="#14a0a8"/>
<rect x="641.43" y="418.02" width="6.0" height="1.73" fill="#8fa2f8"/>
<rect x="641.43" y="419.75" width="6.0" height="1.15" fill="#c9a030"/>
<rect x="649.56" y="387.37" width="6.0" height="14.84" fill="#7b35a5"/>
<rect x="649.56" y="402.21" width="6.0" height="8.90" fill="#fde99a"/>
<rect x="649.56" y="411.11" width="6.0" height="2.08" fill="#4ecfdc"/>
<rect x="649.56" y="413.19" width="6.0" height="3.50" fill="#dcb8f0"/>
<rect x="649.56" y="416.69" width="6.0" height="0.84" fill="#f05a1e"/>
<rect x="649.56" y="417.53" width="6.0" height="0.84" fill="#fccc0a"/>
<rect x="649.56" y="418.37" width="6.0" height="0.42" fill="#9d6cc9"/>
<rect x="649.56" y="418.79" width="6.0" height="0.63" fill="#e9a2c6"/>
<rect x="649.56" y="419.43" width="6.0" height="0.63" fill="#f59a7a"/>
<rect x="649.56" y="420.06" width="6.0" height="0.84" fill="#14a0a8"/>
<rect x="657.70" y="361.56" width="6.0" height="30.27" fill="#7b35a5"/>
<rect x="657.70" y="391.82" width="6.0" height="8.31" fill="#fde99a"/>
<rect x="657.70" y="400.13" width="6.0" height="6.53" fill="#4ecfdc"/>
<rect x="657.70" y="406.66" width="6.0" height="3.50" fill="#dcb8f0"/>
<rect x="657.70" y="410.16" width="6.0" height="1.43" fill="#f05a1e"/>
<rect x="657.70" y="411.59" width="6.0" height="1.43" fill="#fccc0a"/>
<rect x="657.70" y="413.03" width="6.0" height="1.43" fill="#3f50d8"/>
<rect x="657.70" y="414.46" width="6.0" height="1.07" fill="#f59a7a"/>
<rect x="657.70" y="415.53" width="6.0" height="1.07" fill="#9d6cc9"/>
<rect x="657.70" y="416.60" width="6.0" height="1.07" fill="#fcc4a4"/>
<rect x="657.70" y="417.68" width="6.0" height="1.43" fill="#14a0a8"/>
<rect x="657.70" y="419.11" width="6.0" height="1.07" fill="#8fa2f8"/>
<rect x="657.70" y="420.18" width="6.0" height="0.72" fill="#c9a030"/>
<rect x="665.84" y="353.84" width="6.0" height="35.61" fill="#7b35a5"/>
<rect x="665.84" y="389.45" width="6.0" height="8.90" fill="#fde99a"/>
<rect x="665.84" y="398.35" width="6.0" height="8.90" fill="#4ecfdc"/>
<rect x="665.84" y="407.26" width="6.0" height="3.50" fill="#dcb8f0"/>
<rect x="665.84" y="410.76" width="6.0" height="2.03" fill="#f05a1e"/>
<rect x="665.84" y="412.78" width="6.0" height="2.03" fill="#fccc0a"/>
<rect x="665.84" y="414.81" width="6.0" height="1.01" fill="#9d6cc9"/>
<rect x="665.84" y="415.83" width="6.0" height="1.52" fill="#e9a2c6"/>
<rect x="665.84" y="417.35" width="6.0" height="1.52" fill="#f59a7a"/>
<rect x="665.84" y="418.87" width="6.0" height="2.03" fill="#14a0a8"/>
<rect x="673.97" y="380.85" width="6.0" height="13.95" fill="#7b35a5"/>
<rect x="673.97" y="394.79" width="6.0" height="8.31" fill="#fde99a"/>
<rect x="673.97" y="403.10" width="6.0" height="3.56" fill="#4ecfdc"/>
<rect x="673.97" y="406.66" width="6.0" height="3.50" fill="#dcb8f0"/>
<rect x="673.97" y="410.16" width="6.0" height="2.15" fill="#f05a1e"/>
<rect x="673.97" y="412.31" width="6.0" height="2.15" fill="#fccc0a"/>
<rect x="673.97" y="414.46" width="6.0" height="1.07" fill="#9d6cc9"/>
<rect x="673.97" y="415.53" width="6.0" height="1.61" fill="#e9a2c6"/>
<rect x="673.97" y="417.14" width="6.0" height="1.61" fill="#f59a7a"/>
<rect x="673.97" y="418.75" width="6.0" height="2.15" fill="#14a0a8"/>
<rect x="682.11" y="369.57" width="6.0" height="28.19" fill="#7b35a5"/>
<rect x="682.11" y="397.76" width="6.0" height="8.31" fill="#fde99a"/>
<rect x="682.11" y="406.07" width="6.0" height="6.53" fill="#4ecfdc"/>
<rect x="682.11" y="412.60" width="6.0" height="3.50" fill="#dcb8f0"/>
<rect x="682.11" y="416.10" width="6.0" height="0.64" fill="#f05a1e"/>
<rect x="682.11" y="416.74" width="6.0" height="0.64" fill="#fccc0a"/>
<rect x="682.11" y="417.38" width="6.0" height="0.64" fill="#3f50d8"/>
<rect x="682.11" y="418.02" width="6.0" height="0.48" fill="#f59a7a"/>
<rect x="682.11" y="418.50" width="6.0" height="0.48" fill="#9d6cc9"/>
<rect x="682.11" y="418.98" width="6.0" height="0.48" fill="#fcc4a4"/>
<rect x="682.11" y="419.46" width="6.0" height="0.64" fill="#14a0a8"/>
<rect x="682.11" y="420.10" width="6.0" height="0.48" fill="#8fa2f8"/>
<rect x="682.11" y="420.58" width="6.0" height="0.32" fill="#c9a030"/>
<rect x="690.24" y="356.81" width="6.0" height="34.12" fill="#7b35a5"/>
<rect x="690.24" y="390.93" width="6.0" height="8.31" fill="#fde99a"/>
<rect x="690.24" y="399.24" width="6.0" height="7.42" fill="#4ecfdc"/>
<rect x="690.24" y="406.66" width="6.0" height="3.50" fill="#dcb8f0"/>
<rect x="690.24" y="410.16" width="6.0" height="2.15" fill="#f05a1e"/>
<rect x="690.24" y="412.31" width="6.0" height="2.15" fill="#fccc0a"/>
<rect x="690.24" y="414.46" width="6.0" height="1.07" fill="#9d6cc9"/>
<rect x="690.24" y="415.53" width="6.0" height="1.61" fill="#e9a2c6"/>
<rect x="690.24" y="417.14" width="6.0" height="1.61" fill="#f59a7a"/>
<rect x="690.24" y="418.75" width="6.0" height="2.15" fill="#14a0a8"/>
<rect x="698.38" y="360.37" width="6.0" height="29.08" fill="#7b35a5"/>
<rect x="698.38" y="389.45" width="6.0" height="8.31" fill="#fde99a"/>
<rect x="698.38" y="397.76" width="6.0" height="8.90" fill="#4ecfdc"/>
<rect x="698.38" y="406.66" width="6.0" height="3.50" fill="#dcb8f0"/>
<rect x="698.38" y="410.16" width="6.0" height="2.15" fill="#f05a1e"/>
<rect x="698.38" y="412.31" width="6.0" height="2.15" fill="#fccc0a"/>
<rect x="698.38" y="414.46" width="6.0" height="1.07" fill="#9d6cc9"/>
<rect x="698.38" y="415.53" width="6.0" height="1.61" fill="#e9a2c6"/>
<rect x="698.38" y="417.14" width="6.0" height="1.61" fill="#f59a7a"/>
<rect x="698.38" y="418.75" width="6.0" height="2.15" fill="#14a0a8"/>
<rect x="706.52" y="368.38" width="6.0" height="24.93" fill="#7b35a5"/>
<rect x="706.52" y="393.31" width="6.0" height="8.01" fill="#fde99a"/>
<rect x="706.52" y="401.32" width="6.0" height="5.34" fill="#4ecfdc"/>
<rect x="706.52" y="406.66" width="6.0" height="3.50" fill="#dcb8f0"/>
<rect x="706.52" y="410.16" width="6.0" height="1.43" fill="#f05a1e"/>
<rect x="706.52" y="411.59" width="6.0" height="1.43" fill="#fccc0a"/>
<rect x="706.52" y="413.03" width="6.0" height="1.43" fill="#3f50d8"/>
<rect x="706.52" y="414.46" width="6.0" height="1.07" fill="#f59a7a"/>
<rect x="706.52" y="415.53" width="6.0" height="1.07" fill="#9d6cc9"/>
<rect x="706.52" y="416.60" width="6.0" height="1.07" fill="#fcc4a4"/>
<rect x="706.52" y="417.68" width="6.0" height="1.43" fill="#14a0a8"/>
<rect x="706.52" y="419.11" width="6.0" height="1.07" fill="#8fa2f8"/>
<rect x="706.52" y="420.18" width="6.0" height="0.72" fill="#c9a030"/>
<rect x="714.65" y="355.33" width="6.0" height="29.38" fill="#7b35a5"/>
<rect x="714.65" y="384.70" width="6.0" height="8.31" fill="#fde99a"/>
<rect x="714.65" y="393.01" width="6.0" height="8.31" fill="#4ecfdc"/>
<rect x="714.65" y="401.32" width="6.0" height="3.50" fill="#dcb8f0"/>
<rect x="714.65" y="404.82" width="6.0" height="2.14" fill="#f05a1e"/>
<rect x="714.65" y="406.96" width="6.0" height="2.14" fill="#fccc0a"/>
<rect x="714.65" y="409.11" width="6.0" height="2.14" fill="#3f50d8"/>
<rect x="714.65" y="411.25" width="6.0" height="1.61" fill="#f59a7a"/>
<rect x="714.65" y="412.86" width="6.0" height="1.61" fill="#9d6cc9"/>
<rect x="714.65" y="414.47" width="6.0" height="1.61" fill="#fcc4a4"/>
<rect x="714.65" y="416.08" width="6.0" height="2.14" fill="#14a0a8"/>
<rect x="714.65" y="418.22" width="6.0" height="1.61" fill="#8fa2f8"/>
<rect x="714.65" y="419.83" width="6.0" height="1.07" fill="#c9a030"/>
<rect x="722.79" y="357.11" width="6.0" height="30.56" fill="#7b35a5"/>
<rect x="722.79" y="387.67" width="6.0" height="8.01" fill="#fde99a"/>
<rect x="722.79" y="395.68" width="6.0" height="6.82" fill="#4ecfdc"/>
<rect x="722.79" y="402.51" width="6.0" height="3.50" fill="#dcb8f0"/>
<rect x="722.79" y="406.01" width="6.0" height="1.99" fill="#f05a1e"/>
<rect x="722.79" y="407.99" width="6.0" height="1.99" fill="#fccc0a"/>
<rect x="722.79" y="409.98" width="6.0" height="1.99" fill="#3f50d8"/>
<rect x="722.79" y="411.96" width="6.0" height="1.49" fill="#f59a7a"/>
<rect x="722.79" y="413.45" width="6.0" height="1.49" fill="#9d6cc9"/>
<rect x="722.79" y="414.94" width="6.0" height="1.49" fill="#fcc4a4"/>
<rect x="722.79" y="416.43" width="6.0" height="1.99" fill="#14a0a8"/>
<rect x="722.79" y="418.42" width="6.0" height="1.49" fill="#8fa2f8"/>
<rect x="722.79" y="419.91" width="6.0" height="0.99" fill="#c9a030"/>
<rect x="730.92" y="308.74" width="6.0" height="61.13" fill="#7b35a5"/>
<rect x="730.92" y="369.87" width="6.0" height="8.61" fill="#fde99a"/>
<rect x="730.92" y="378.47" width="6.0" height="16.91" fill="#4ecfdc"/>
<rect x="730.92" y="395.39" width="6.0" height="3.50" fill="#dcb8f0"/>
<rect x="730.92" y="398.89" width="6.0" height="2.94" fill="#f05a1e"/>
<rect x="730.92" y="401.82" width="6.0" height="2.94" fill="#fccc0a"/>
<rect x="730.92" y="404.76" width="6.0" height="2.94" fill="#3f50d8"/>
<rect x="730.92" y="407.69" width="6.0" height="2.20" fill="#f59a7a"/>
<rect x="730.92" y="409.89" width="6.0" height="2.20" fill="#9d6cc9"/>
<rect x="730.92" y="412.09" width="6.0" height="2.20" fill="#fcc4a4"/>
<rect x="730.92" y="414.30" width="6.0" height="2.94" fill="#14a0a8"/>
<rect x="730.92" y="417.23" width="6.0" height="2.20" fill="#8fa2f8"/>
<rect x="730.92" y="419.43" width="6.0" height="1.47" fill="#c9a030"/>
<rect x="739.06" y="349.39" width="6.0" height="40.06" fill="#7b35a5"/>
<rect x="739.06" y="389.45" width="6.0" height="8.31" fill="#fde99a"/>
<rect x="739.06" y="397.76" width="6.0" height="8.90" fill="#4ecfdc"/>
<rect x="739.06" y="406.66" width="6.0" height="3.50" fill="#dcb8f0"/>
<rect x="739.06" y="410.16" width="6.0" height="2.15" fill="#f05a1e"/>
<rect x="739.06" y="412.31" width="6.0" height="2.15" fill="#fccc0a"/>
<rect x="739.06" y="414.46" width="6.0" height="1.07" fill="#9d6cc9"/>
<rect x="739.06" y="415.53" width="6.0" height="1.61" fill="#e9a2c6"/>
<rect x="739.06" y="417.14" width="6.0" height="1.61" fill="#f59a7a"/>
<rect x="739.06" y="418.75" width="6.0" height="2.15" fill="#14a0a8"/>
<rect x="747.20" y="311.71" width="6.0" height="59.35" fill="#7b35a5"/>
<rect x="747.20" y="371.05" width="6.0" height="8.31" fill="#fde99a"/>
<rect x="747.20" y="379.36" width="6.0" height="13.95" fill="#4ecfdc"/>
<rect x="747.20" y="393.31" width="6.0" height="3.50" fill="#dcb8f0"/>
<rect x="747.20" y="396.81" width="6.0" height="3.21" fill="#f05a1e"/>
<rect x="747.20" y="400.02" width="6.0" height="3.21" fill="#fccc0a"/>
<rect x="747.20" y="403.23" width="6.0" height="3.21" fill="#3f50d8"/>
<rect x="747.20" y="406.45" width="6.0" height="2.41" fill="#f59a7a"/>
<rect x="747.20" y="408.85" width="6.0" height="2.41" fill="#9d6cc9"/>
<rect x="747.20" y="411.26" width="6.0" height="2.41" fill="#fcc4a4"/>
<rect x="747.20" y="413.67" width="6.0" height="3.21" fill="#14a0a8"/>
<rect x="747.20" y="416.88" width="6.0" height="2.41" fill="#8fa2f8"/>
<rect x="747.20" y="419.29" width="6.0" height="1.61" fill="#c9a030"/>
<rect x="755.33" y="374.02" width="6.0" height="18.99" fill="#7b35a5"/>
<rect x="755.33" y="393.01" width="6.0" height="7.72" fill="#fde99a"/>
<rect x="755.33" y="400.73" width="6.0" height="4.45" fill="#4ecfdc"/>
<rect x="755.33" y="405.18" width="6.0" height="3.50" fill="#dcb8f0"/>
<rect x="755.33" y="408.68" width="6.0" height="1.63" fill="#f05a1e"/>
<rect x="755.33" y="410.31" width="6.0" height="1.63" fill="#fccc0a"/>
<rect x="755.33" y="411.94" width="6.0" height="1.63" fill="#3f50d8"/>
<rect x="755.33" y="413.57" width="6.0" height="1.22" fill="#f59a7a"/>
<rect x="755.33" y="414.79" width="6.0" height="1.22" fill="#9d6cc9"/>
<rect x="755.33" y="416.01" width="6.0" height="1.22" fill="#fcc4a4"/>
<rect x="755.33" y="417.23" width="6.0" height="1.63" fill="#14a0a8"/>
<rect x="755.33" y="418.86" width="6.0" height="1.22" fill="#8fa2f8"/>
<rect x="755.33" y="420.09" width="6.0" height="0.81" fill="#c9a030"/>
<rect x="763.47" y="362.15" width="6.0" height="25.22" fill="#7b35a5"/>
<rect x="763.47" y="387.37" width="6.0" height="8.31" fill="#fde99a"/>
<rect x="763.47" y="395.68" width="6.0" height="5.64" fill="#4ecfdc"/>
<rect x="763.47" y="401.32" width="6.0" height="3.50" fill="#dcb8f0"/>
<rect x="763.47" y="404.82" width="6.0" height="2.14" fill="#f05a1e"/>
<rect x="763.47" y="406.96" width="6.0" height="2.14" fill="#fccc0a"/>
<rect x="763.47" y="409.11" width="6.0" height="2.14" fill="#3f50d8"/>
<rect x="763.47" y="411.25" width="6.0" height="1.61" fill="#f59a7a"/>
<rect x="763.47" y="412.86" width="6.0" height="1.61" fill="#9d6cc9"/>
<rect x="763.47" y="414.47" width="6.0" height="1.61" fill="#fcc4a4"/>
<rect x="763.47" y="416.08" width="6.0" height="2.14" fill="#14a0a8"/>
<rect x="763.47" y="418.22" width="6.0" height="1.61" fill="#8fa2f8"/>
<rect x="763.47" y="419.83" width="6.0" height="1.07" fill="#c9a030"/>
<rect x="771.60" y="346.42" width="6.0" height="43.03" fill="#7b35a5"/>
<rect x="771.60" y="389.45" width="6.0" height="8.31" fill="#fde99a"/>
<rect x="771.60" y="397.76" width="6.0" height="14.84" fill="#4ecfdc"/>
<rect x="771.60" y="412.60" width="6.0" height="3.50" fill="#dcb8f0"/>
<rect x="771.60" y="416.10" width="6.0" height="0.96" fill="#f05a1e"/>
<rect x="771.60" y="417.06" width="6.0" height="0.96" fill="#fccc0a"/>
<rect x="771.60" y="418.02" width="6.0" height="0.48" fill="#9d6cc9"/>
<rect x="771.60" y="418.50" width="6.0" height="0.72" fill="#e9a2c6"/>
<rect x="771.60" y="419.22" width="6.0" height="0.72" fill="#f59a7a"/>
<rect x="771.60" y="419.94" width="6.0" height="0.96" fill="#14a0a8"/>
<rect x="779.74" y="362.15" width="6.0" height="31.75" fill="#7b35a5"/>
<rect x="779.74" y="393.90" width="6.0" height="8.31" fill="#fde99a"/>
<rect x="779.74" y="402.21" width="6.0" height="10.39" fill="#4ecfdc"/>
<rect x="779.74" y="412.60" width="6.0" height="3.50" fill="#dcb8f0"/>
<rect x="779.74" y="416.10" width="6.0" height="0.64" fill="#f05a1e"/>
<rect x="779.74" y="416.74" width="6.0" height="0.64" fill="#fccc0a"/>
<rect x="779.74" y="417.38" width="6.0" height="0.64" fill="#3f50d8"/>
<rect x="779.74" y="418.02" width="6.0" height="0.48" fill="#f59a7a"/>
<rect x="779.74" y="418.50" width="6.0" height="0.48" fill="#9d6cc9"/>
<rect x="779.74" y="418.98" width="6.0" height="0.48" fill="#fcc4a4"/>
<rect x="779.74" y="419.46" width="6.0" height="0.64" fill="#14a0a8"/>
<rect x="779.74" y="420.10" width="6.0" height="0.48" fill="#8fa2f8"/>
<rect x="779.74" y="420.58" width="6.0" height="0.32" fill="#c9a030"/>
<rect x="787.88" y="380.85" width="6.0" height="24.93" fill="#7b35a5"/>
<rect x="787.88" y="405.77" width="6.0" height="3.86" fill="#fde99a"/>
<rect x="787.88" y="409.63" width="6.0" height="5.34" fill="#4ecfdc"/>
<rect x="787.88" y="414.97" width="6.0" height="2.93" fill="#dcb8f0"/>
<rect x="787.88" y="417.90" width="6.0" height="0.60" fill="#f05a1e"/>
<rect x="787.88" y="418.50" width="6.0" height="0.60" fill="#fccc0a"/>
<rect x="787.88" y="419.10" width="6.0" height="0.30" fill="#9d6cc9"/>
<rect x="787.88" y="419.40" width="6.0" height="0.45" fill="#e9a2c6"/>
<rect x="787.88" y="419.85" width="6.0" height="0.45" fill="#f59a7a"/>
<rect x="787.88" y="420.30" width="6.0" height="0.60" fill="#14a0a8"/>
<line x1="46" y1="421.4" x2="812" y2="421.4" stroke="#c9cdf0" stroke-width="1.2"/>
  <!-- top bar icons -->
  <g fill="none" stroke="#e6e6e6">
    <rect x="8.6" y="10.6" width="8.6" height="6.8" stroke-width="1.2"/>
    <line x1="10.2" y1="12.6" x2="14.6" y2="12.6" stroke-width="0.9"/>
    <line x1="10.2" y1="14.6" x2="14.6" y2="14.6" stroke-width="0.9"/>
    <line x1="15.2" y1="12.6" x2="16" y2="12.6" stroke-width="0.9"/>
    <line x1="15.2" y1="14.6" x2="16" y2="14.6" stroke-width="0.9"/>
    <circle cx="37.5" cy="14" r="2.8" stroke-width="1.6"/>
    <line x1="39.7" y1="16.2" x2="43" y2="19.5" stroke-width="1.8"/>
  </g>
  <rect x="11.4" y="17.8" width="2.8" height="1.4" fill="#e6e6e6"/>
  <polygon points="650.6,10.4 659.6,10.4 656.3,14.6 656.3,18.8 653.9,18.8 653.9,14.6" fill="#ececec"/><line x1="653" y1="12.3" x2="657.3" y2="12.3" stroke="#181818" stroke-width="0.9"/>
  <polyline points="682.5,10.5 678.5,14.8 682.5,19" fill="none" stroke="#f0f0f0" stroke-width="1.6"/>
  <polyline points="772.2,11 775.8,14.6 772.2,18.2" fill="none" stroke="#7a7a7a" stroke-width="1.2"/>
  <path d="M794,9.8 h11.3 v8 h-1.3 l-1.7,1.9 v-1.9 h-8.3 z" fill="#f4f4f4"/>
  <circle cx="824.6" cy="12.6" r="1.9" fill="#f4f4f4"/>
  <rect x="821.6" y="15.5" width="7.2" height="3.2" fill="#f4f4f4"/>
  <circle cx="829" cy="10" r="2.1" fill="#3cc8d8"/>
  <!-- header icon -->
  <g fill="#3f3f3f">
    <rect x="15.4" y="60.6" width="1.8" height="23"/>
    <rect x="15.4" y="81.9" width="22.7" height="1.8"/>
    <rect x="20.1" y="72.8" width="2.8" height="7"/>
    <rect x="26.5" y="67" width="2.9" height="12.8"/>
    <rect x="32.3" y="70" width="3.1" height="9.8"/>
  </g>
  <!-- dropdown chevrons -->
  <g fill="none" stroke="#12a1b1" stroke-width="1.5">
    <polyline points="86.5,168.8 89.7,171.8 92.9,168.8"/>
    <polyline points="137.8,168.8 141,171.8 144.2,168.8"/>
    <polyline points="226,168.8 229.3,171.8 232.6,168.8"/>
  </g>
  <!-- pencil -->
  <path d="M799.4,174.6 l1.1,-3 l5.4,-5.4 l2,2 l-5.4,5.4 z" fill="#12a1b1"/><line x1="804.3" y1="167.6" x2="806.6" y2="169.9" stroke="#fff" stroke-width="0.5"/>
  <!-- filter icon -->
  <polygon points="27.4,195.2 34.1,195.2 31.6,198.4 31.6,201 30,201 30,198.4" fill="#747474"/><line x1="29.3" y1="196.6" x2="32.2" y2="196.6" stroke="#fff" stroke-width="0.6"/>
  <!-- chip x -->
  <g stroke="#12a1b1" stroke-width="1.5">
    <line x1="204" y1="195.5" x2="209.7" y2="201"/><line x1="209.7" y1="195.5" x2="204" y2="201"/>
    <line x1="318.2" y1="195.5" x2="323.8" y2="201"/><line x1="323.8" y1="195.5" x2="318.2" y2="201"/>
  </g>
  <!-- legend icon -->
  <g fill="#5b67dd">
    <rect x="376.5" y="446" width="1.3" height="3.5"/>
    <rect x="378.8" y="443.5" width="1.3" height="6"/>
    <rect x="381.1" y="445" width="1.3" height="4.5"/>
  </g>
  <!-- panel close x -->
  <g stroke="#fff" stroke-width="1.6">
    <line x1="1012.3" y1="32" x2="1019" y2="38.3"/><line x1="1019" y1="32" x2="1012.3" y2="38.3"/>
  </g>
  <!-- external link icon -->
  <g fill="none" stroke="#f0f0f0" stroke-width="1">
    <path d="M884.8,254.2 h-3.2 v4.8 h4.8 v-3.2"/>
    <path d="M884.3,256.6 l3.2,-3.2 M885.3,253.4 h2.2 v2.2"/>
  </g>
  <!-- red annotations -->
  <ellipse cx="218.5" cy="198.7" rx="118" ry="14.2" fill="none" stroke="#e8363a" stroke-width="1.3" transform="rotate(-0.5 218.5 198.7)"/>
  <circle cx="808.2" cy="244.2" r="6.7" fill="#ee0000"/>
  <polyline points="807,244.1 821.2,244.1 821.2,293 836,293" fill="none" stroke="#ee0000" stroke-width="1.4"/>
  <ellipse cx="883.1" cy="296.5" rx="47.3" ry="18.8" fill="none" stroke="#f20000" stroke-width="6.4"/>
</svg>
</body></html>
